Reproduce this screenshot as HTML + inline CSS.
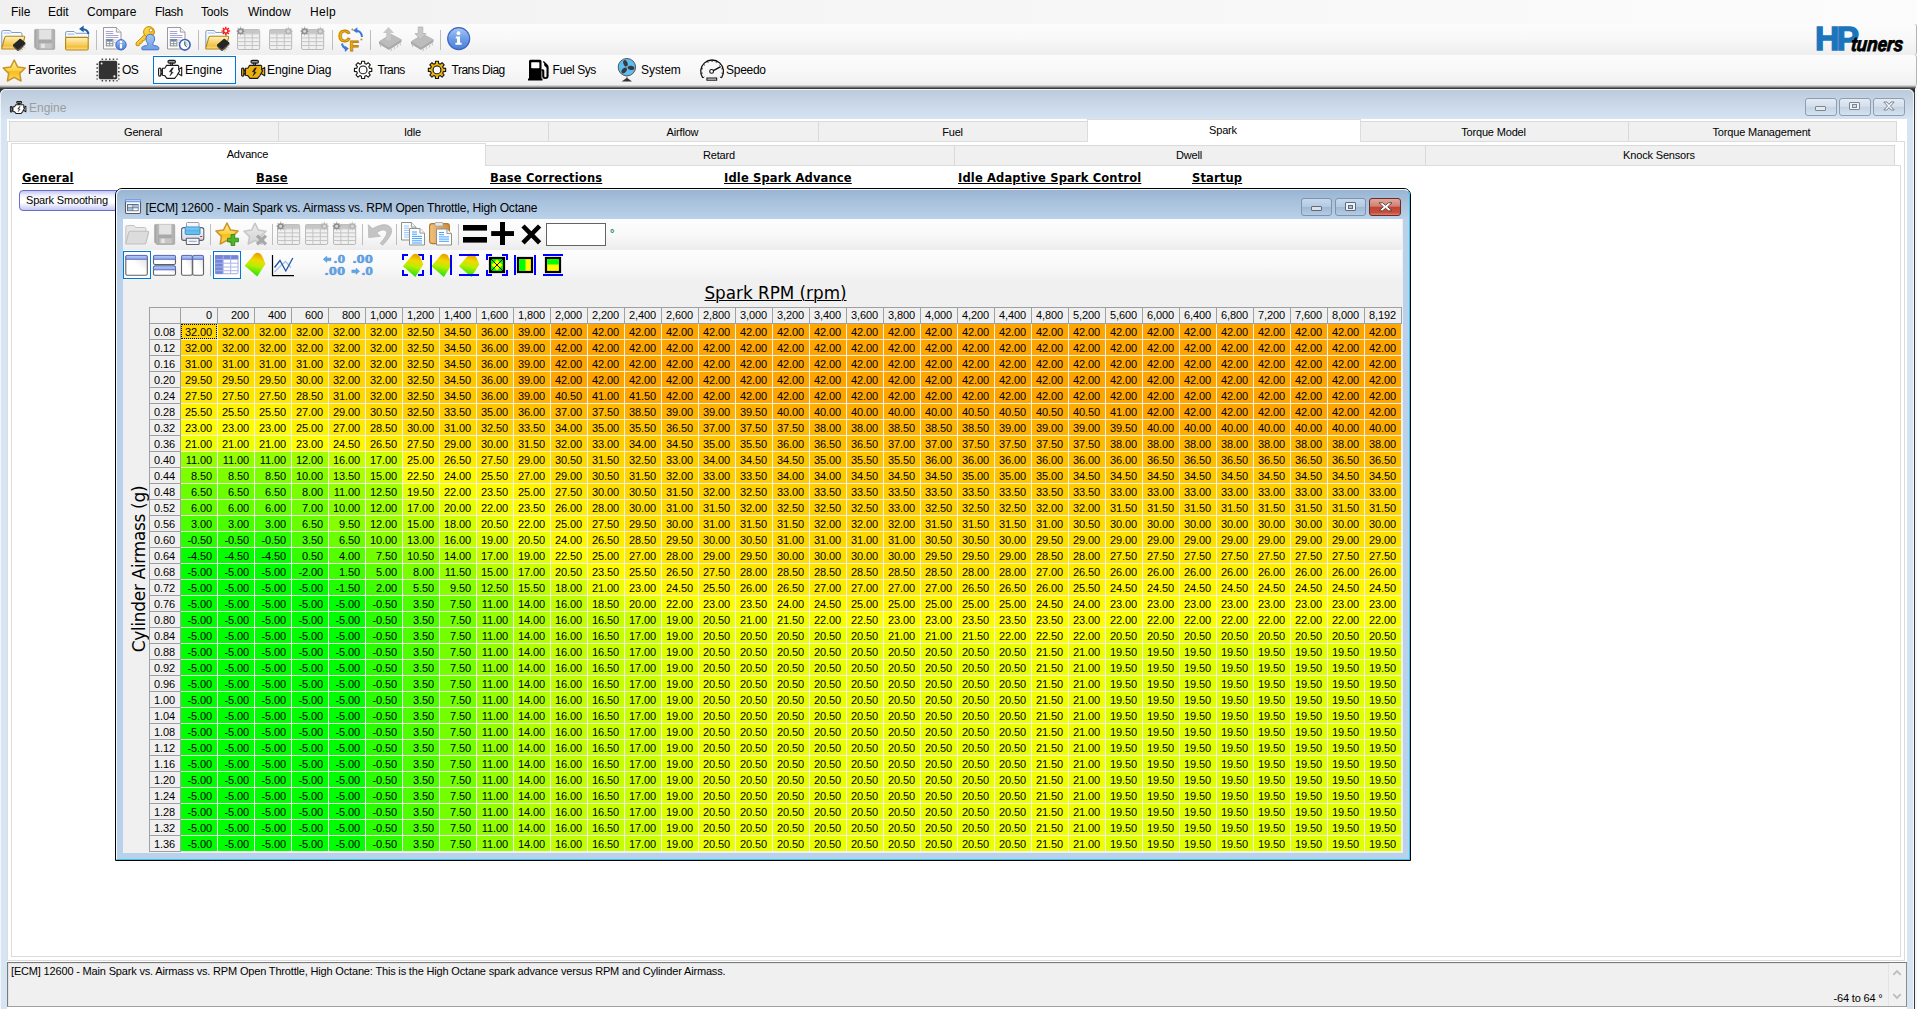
<!DOCTYPE html>
<html lang="en"><head><meta charset="utf-8"><title>VCM Editor</title>
<style>
html,body{margin:0;padding:0}
body{width:1917px;height:1009px;overflow:hidden;background:#f0f0f0;position:relative;font-family:"Liberation Sans",sans-serif;font-size:12px;color:#000}
div,span,i{box-sizing:border-box}
.abs{position:absolute}
svg{position:absolute;overflow:visible}
#menubar{position:absolute;left:0;top:0;width:1917px;height:24px;background:linear-gradient(90deg,#f0f0f0,#fcfcfc)}
#menubar span{position:absolute;top:5px;font-size:12px;line-height:15px;white-space:nowrap}
#tb1{position:absolute;left:0;top:24px;width:1917px;height:31px;border-right:1px solid #b4b4b4;background:linear-gradient(#fcfcfc,#f8f8f8 50%,#eeeeee);border-radius:0 3px 3px 0}
#tb2{position:absolute;left:0;top:55px;width:1917px;height:31px;border-right:1px solid #b4b4b4;background:linear-gradient(#fcfcfc,#f8f8f8 50%,#efefef);border-radius:0 3px 3px 0}
.sep{position:absolute;width:1px;background:#bdbdbd}
.tbl{position:absolute;font-size:12px;line-height:15px;white-space:nowrap}
#mdishadow{position:absolute;left:0;top:85px;width:1916px;height:4px;border-radius:0 0 3px 0;background:linear-gradient(#e6e6e6,#b0b0b0 35%,#5a5a5a 70%,#2e2e2e)}
#mdibg{position:absolute;left:0;top:89px;width:1917px;height:920px;background:#f6f6f6}
#mdicorner{position:absolute;left:0;top:88px;width:1915px;height:8px;background:#2e2e2e}
/* engine window */
#eng{position:absolute;left:-1px;top:88px;width:1916px;height:930px;background:#d7e4f2;border:1px solid #3a3a3a;border-radius:7px 7px 0 0}
#engcap{position:absolute;left:0;top:0;width:1914px;height:31px;background:linear-gradient(#bccbdc,#d7e4f2);border-radius:6px 6px 0 0;border:1px solid rgba(255,255,255,.7);border-bottom:none}
#engfr{position:absolute;left:0;top:30px;width:1914px;height:900px;border-left:1px solid rgba(255,255,255,.7);border-right:1px solid rgba(255,255,255,.7)}
.capbtn{position:absolute;height:18px;border:1px solid #8f9db0;border-radius:3px;background:linear-gradient(#e3ecf6,#d3deeb 48%,#c5d3e3 52%,#d5e1ee)}
.tab{position:absolute;background:#f0f0f0;border:1px solid #d9d9d9;font-size:11px;line-height:13px;text-align:center;white-space:nowrap;letter-spacing:-.17px;text-indent:-2px}
.tab.sel{background:#fff;border-color:#fff}
.hdg{position:absolute;font-family:"DejaVu Sans",sans-serif;font-weight:bold;font-size:11.5px;line-height:13px;white-space:nowrap;text-decoration:underline;letter-spacing:.15px}
/* child */
#child{position:absolute;left:115px;top:188px;width:1296px;height:673px;background:#b9d1ea;border:1px solid #000;border-radius:7px 7px 0 0}
#childcap{position:absolute;left:0;top:0;width:1294px;height:30px;background:linear-gradient(#98b4d2,#a9c2dd 45%,#b9d1ea);border-radius:6px 6px 0 0}
#client{position:absolute;left:7px;top:30px;width:1280px;height:634px;background:#f0f0f0}
.ctb{position:absolute;left:0;width:1279px;background:linear-gradient(#fdfdfd,#f9f9f9 50%,#ececec)}
#grid{position:absolute;left:26px;top:88px;width:1253px;height:545px}
#grid table{position:absolute;left:0;top:0;border-collapse:separate;border-spacing:1px;table-layout:fixed;font-size:11px;letter-spacing:-.1px;width:1253px}
#grid th,#grid td{vertical-align:top;height:13px;padding:2px 5px 0 0;text-align:right;font-weight:normal;line-height:13px;overflow:hidden;white-space:nowrap;width:31px}
#grid th{background:#f0f0f0}
#grid th.rl{width:25px;padding-right:5px}
#grid .hline{position:absolute;left:0;top:0;width:1253px;height:17px;background:#a0a0a0}
#grid .vline{position:absolute;left:0;top:0;width:32px;height:545px;background:#a0a0a0}
#grid .hb{display:none}
#grid .vb{display:none}
#grid td.sel{outline:1px dotted #000;outline-offset:-1px}
#desc{position:absolute;left:7px;top:962px;width:1900px;height:45px;background:#f0f0f0;border:1px solid #7a7a7a;border-right-color:#8c8c8c;border-bottom-color:#a0a0a0;box-shadow:inset 1px 1px 0 #e3e3e3;font-size:11px;line-height:13px;letter-spacing:-.17px}
#grid tr.hd th{height:14px;padding-top:1px}

</style></head>
<body>
<div id="menubar">
<span style="left:11px">File</span><span style="left:48px">Edit</span><span style="left:87px">Compare</span><span style="left:155px;letter-spacing:-.3px">Flash</span><span style="left:201px;letter-spacing:-.15px">Tools</span><span style="left:248px">Window</span><span style="left:310px;letter-spacing:.3px">Help</span>
</div>
<div id="tb1">
<svg width="0" height="0" style="left:0;top:0"><defs>
<linearGradient id="gFold" x1="0" y1="0" x2="0" y2="1"><stop offset="0" stop-color="#fff3c4"/><stop offset=".55" stop-color="#f7cf62"/><stop offset=".75" stop-color="#f3bf3c"/><stop offset="1" stop-color="#fbe39a"/></linearGradient>
<linearGradient id="gBack" x1="0" y1="0" x2="0" y2="1"><stop offset="0" stop-color="#ffffff"/><stop offset="1" stop-color="#dfeaf8"/></linearGradient>
<linearGradient id="gStar" x1="0" y1="0" x2="0" y2="1"><stop offset="0" stop-color="#fff2a8"/><stop offset=".5" stop-color="#fcd040"/><stop offset=".55" stop-color="#f8bd20"/><stop offset="1" stop-color="#fbd668"/></linearGradient>
<linearGradient id="gStarG" x1="0" y1="0" x2="0" y2="1"><stop offset="0" stop-color="#ececec"/><stop offset="1" stop-color="#d2d2d2"/></linearGradient>
<linearGradient id="gInfo" x1="0" y1="0" x2="0" y2="1"><stop offset="0" stop-color="#a9c6f2"/><stop offset=".5" stop-color="#6f9de6"/><stop offset="1" stop-color="#4a7fd6"/></linearGradient>
<linearGradient id="gUser" x1="0" y1="0" x2="0" y2="1"><stop offset="0" stop-color="#a8c6f0"/><stop offset="1" stop-color="#6f9ee4"/></linearGradient>
<linearGradient id="gKey" x1="0" y1="0" x2="1" y2="1"><stop offset="0" stop-color="#ffe36a"/><stop offset="1" stop-color="#f2b100"/></linearGradient>
<linearGradient id="gSurf" x1="0.6" y1="0" x2="0.4" y2="1"><stop offset="0" stop-color="#e89a00"/><stop offset=".3" stop-color="#f2d800"/><stop offset=".55" stop-color="#b8ee00"/><stop offset="1" stop-color="#10e010"/></linearGradient>
<linearGradient id="gWinBar" x1="0" y1="0" x2="0" y2="1"><stop offset="0" stop-color="#b9cdf6"/><stop offset="1" stop-color="#8aa6ea"/></linearGradient>
<linearGradient id="gWinBody" x1="0" y1="1" x2="1" y2="0"><stop offset="0" stop-color="#ffffff"/><stop offset=".5" stop-color="#ffffff"/><stop offset="1" stop-color="#dcdcdc"/></linearGradient>
<linearGradient id="gChipG" x1="0" y1="0" x2="1" y2="1"><stop offset="0" stop-color="#c4c4c4"/><stop offset="1" stop-color="#a2a2a2"/></linearGradient>
<linearGradient id="gClip" x1="0" y1="0" x2="1" y2="0"><stop offset="0" stop-color="#f0c27e"/><stop offset="1" stop-color="#c98f42"/></linearGradient>
<linearGradient id="gPrn" x1="0" y1="0" x2="0" y2="1"><stop offset="0" stop-color="#fbfbfd"/><stop offset="1" stop-color="#d6d8e0"/></linearGradient>
<linearGradient id="gPrnB" x1="0" y1="0" x2="0" y2="1"><stop offset="0" stop-color="#8fd4f7"/><stop offset=".5" stop-color="#58b4ea"/><stop offset="1" stop-color="#7cc8f2"/></linearGradient>
</defs></svg><svg style="left:0px;top:0px" width="480" height="31" viewBox="0 24 480 31"><path d="M1.8 47.5v-15.5q0-1.5 1.5-1.5h6.8l1.5 2h8.9q1.5 0 1.5 1.5v5" fill="url(#gBack)" stroke="#7f9dbd" stroke-width="1"/><path d="M3.6 32.4h6.5l1 1.2h-7.5z" fill="#9cc4f7"/><path d="M1.8 48.0l3-10.6q.3-1.2 1.6-1.2h17.2q1.4 0 1 1.3l-2.7 10.3q-.3 1.2-1.6 1.2h-17.5q-1.4 0-1-1z" fill="url(#gFold)" stroke="#b8860b" stroke-width="1.1"/><g transform="translate(19.2 44.2)"><path d="M-6 .2L.4 -5.200q.6-.5 1.300 0L6 -1.600q.6 .5 0 1.100L-.6 5.400q-.7 .6-1.400 0L-6 1.800q-.6-.8 0-1.600z" fill="#262626"/><path d="M-6.100 1.200L-1.600 5.400q.5 .5 1 0L6.200 -.6v1.200L-.4 6.600q-.8 .6-1.500 0L-6.100 2.600z" fill="#4d4d4d"/><path d="M1 6.200l.6 1M2.800 4.600l.6 1M4.600 3l.6 1" stroke="#9a9a9a" stroke-width=".9"/></g><path d="M35.4 29.4h18.5q.8 0 .8.8v18.4q0 .8-.8.8h-17l-2.3-2.1v-17.1q0-.8.8-.8z" fill="#a9a9a9" stroke="#9a9a9a" stroke-width=".6"/><rect x="38.9" y="29.4" width="12.5" height="10" fill="#e3e3e3" stroke="#c9c9c9" stroke-width=".6"/><rect x="39.4" y="43.2" width="12.4" height="5.4" fill="#c6c6c6"/><rect x="41.2" y="43.8" width="3.6" height="4.2" fill="#e4e4e4"/><path d="M37.2 30.0v18.5M52.9 30.0v18.5" stroke="#bdbdbd" stroke-width="1"/><path d="M65.6 45.0v-12q0-1.5 1.5-1.5h7l1.8 1.8h11.2q1.5 0 1.5 1.5v4" fill="url(#gBack)" stroke="#7f9dbd" stroke-width="1"/><path d="M67.4 33.6h6.5l1 1.2h-7.5z" fill="#9cc4f7"/><rect x="65.6" y="37.4" width="22.6" height="12.6" rx="1.2" fill="url(#gFold)" stroke="#b8860b" stroke-width="1.1"/><path d="M88.500 34q-.8-4.500-5.800-4.800" fill="none" stroke="#1c5fae" stroke-width="2"/><path d="M79 29l4.700-3.400v6.600z" fill="#1c5fae"/><path d="M103.5 27.5h12.9l4.6 4.6v16.9h-17.5z" fill="#fcfcfc" stroke="#9a9a9a" stroke-width="1"/><path d="M116.4 27.5v4.6h4.6" fill="#f0f0f0" stroke="#9a9a9a" stroke-width=".9"/><path d="M105.8 31.5h7.5M105.8 33.5h7.5M105.8 35.5h12.6M105.8 37.5h12.6" stroke="#a9a4d6" stroke-width="1"/><rect x="106.3" y="39.5" width="6.6" height="6.4" fill="#fff" stroke="#8a8a8a" stroke-width="1"/><rect x="106.8" y="40.0" width="5.6" height="1.6" fill="#4f8fc0"/><path d="M106.3 43.7h6.6M109.6 41.6v4.2" stroke="#8a8a8a" stroke-width=".9"/><path d="M114.0 40.0h2.5M114.0 42.5h2" stroke="#b7c4e6" stroke-width="1"/><circle cx="121.0" cy="44.8" r="5.2" fill="url(#gInfo)" stroke="#3a66c4" stroke-width="1"/><circle cx="121.0" cy="41.9" r="1.2" fill="#fff"/><rect x="119.9" y="43.8" width="2.2" height="4.6" fill="#fff"/><g transform="translate(135.0 26.4)"><path d="M9.600 8.200L1 16.600l.3 2.600 2.700 .1 .9-1 -.1-1.500 1.500 .1 .9-1 -.1-1.500 1.600 .1 4.500-4.500z" fill="url(#gKey)" stroke="#c48a00" stroke-width="1" stroke-linejoin="round"/><circle cx="14" cy="5.600" r="5.400" fill="url(#gKey)" stroke="#c48a00" stroke-width="1"/><circle cx="15.900" cy="3.900" r="1.700" fill="#fff" stroke="#c48a00" stroke-width=".9"/><path d="M15.300 7.900c2.500 0 4.300 1.900 4.300 4.600 0 1.900-.8 3.400-1.700 4.200v1.300c0 .6 .4 .9 1.200 1.100l3 .7c1.200 .3 1.700 1 1.700 2v.8c0 .5-.3 .8-.8 .8h-15.400c-.5 0-.8-.3-.8-.8v-.8c0-1 .5-1.700 1.700-2l3-.7c.8-.2 1.200-.5 1.200-1.100v-1.300c-.9-.8-1.700-2.300-1.700-4.200 0-2.700 1.800-4.600 4.300-4.600z" fill="url(#gUser)" stroke="#3d6fd0" stroke-width="1"/></g><path d="M167.5 27.5h12.9l4.6 4.6v16.9h-17.5z" fill="#fcfcfc" stroke="#9a9a9a" stroke-width="1"/><path d="M180.4 27.5v4.6h4.6" fill="#f0f0f0" stroke="#9a9a9a" stroke-width=".9"/><path d="M169.8 31.5h7.5M169.8 33.5h7.5M169.8 35.5h12.6M169.8 37.5h12.6" stroke="#a9a4d6" stroke-width="1"/><rect x="170.3" y="39.5" width="6.6" height="6.4" fill="#fff" stroke="#8a8a8a" stroke-width="1"/><rect x="170.8" y="40.0" width="5.6" height="1.6" fill="#4f8fc0"/><path d="M170.3 43.7h6.6M173.6 41.6v4.2" stroke="#8a8a8a" stroke-width=".9"/><path d="M178.0 40.0h2.5M178.0 42.5h2" stroke="#b7c4e6" stroke-width="1"/><circle cx="184.8" cy="44.8" r="5.3" fill="#fff" stroke="#3c5fb4" stroke-width="1.6"/><path d="M184.8 44.8v-3.6a3.6 3.6 0 0 1 3.1 5.4z" fill="#bfe0f2"/><path d="M184.8 41.4v3.6l2 2.2" fill="none" stroke="#444" stroke-width="1"/><path d="M205.8 47.5v-15.5q0-1.5 1.5-1.5h6.8l1.5 2h8.9q1.5 0 1.5 1.5v5" fill="url(#gBack)" stroke="#7f9dbd" stroke-width="1"/><path d="M207.6 32.4h6.5l1 1.2h-7.5z" fill="#9cc4f7"/><path d="M205.8 48.0l3-10.6q.3-1.2 1.6-1.2h17.2q1.4 0 1 1.3l-2.7 10.3q-.3 1.2-1.6 1.2h-17.5q-1.4 0-1-1z" fill="url(#gFold)" stroke="#b8860b" stroke-width="1.1"/><g transform="translate(223.2 44.2)"><path d="M-6 .2L.4 -5.200q.6-.5 1.300 0L6 -1.600q.6 .5 0 1.100L-.6 5.400q-.7 .6-1.400 0L-6 1.800q-.6-.8 0-1.600z" fill="#262626"/><path d="M-6.100 1.200L-1.600 5.400q.5 .5 1 0L6.200 -.6v1.200L-.4 6.600q-.8 .6-1.500 0L-6.100 2.600z" fill="#4d4d4d"/><path d="M1 6.200l.6 1M2.800 4.600l.6 1M4.600 3l.6 1" stroke="#9a9a9a" stroke-width=".9"/></g><g stroke="#ff1010" stroke-width="1.3"><path d="M227.80 31.00L230.10 31.00"/><path d="M227.21 32.41L228.84 34.04"/><path d="M225.80 33.00L225.80 35.30"/><path d="M224.39 32.41L222.76 34.04"/><path d="M223.80 31.00L221.50 31.00"/><path d="M224.39 29.59L222.76 27.96"/><path d="M225.80 29.00L225.80 26.70"/><path d="M227.21 29.59L228.84 27.96"/></g><circle cx="225.8" cy="31.0" r="2.1" fill="#fff" stroke="#ff1010" stroke-width="1.3"/><rect x="237.5" y="29.5" width="22.2" height="20" rx="1.5" fill="#f0f0f0" stroke="#b9b9b9" stroke-width="1"/><path d="M237.5 30.5q0-1 1-1h20.200q1 0 1 1v3h-22.200z" fill="#c6c6c6"/><path d="M237.5 33.9h22.2M237.5 37.9h22.2M237.5 41.7h22.2M237.5 45.5h22.2" stroke="#c4c4c4" stroke-width="1"/><path d="M244.9 30.0v19M252.3 30.0v19" stroke="#c4c4c4" stroke-width="1"/><g stroke="#8c8c8c" stroke-width="1.2" stroke-dasharray="1 .6"><path d="M243.00 31.20L245.00 31.20"/><path d="M242.30 32.90L243.71 34.31"/><path d="M240.60 33.60L240.60 35.60"/><path d="M238.90 32.90L237.49 34.31"/><path d="M238.20 31.20L236.20 31.20"/><path d="M238.90 29.50L237.49 28.09"/><path d="M240.60 28.80L240.60 26.80"/><path d="M242.30 29.50L243.71 28.09"/></g><circle cx="240.6" cy="31.2" r="2.2" fill="#d8d8d8" stroke="#8c8c8c" stroke-width="1.3"/><rect x="269.5" y="29.5" width="22.2" height="20" rx="1.5" fill="#f0f0f0" stroke="#b9b9b9" stroke-width="1"/><path d="M269.5 30.5q0-1 1-1h20.200q1 0 1 1v3h-22.200z" fill="#c6c6c6"/><path d="M269.5 33.9h22.2M269.5 37.9h22.2M269.5 41.7h22.2M269.5 45.5h22.2" stroke="#c4c4c4" stroke-width="1"/><path d="M276.9 30.0v19M284.3 30.0v19" stroke="#c4c4c4" stroke-width="1"/><g stroke="#b4b4b4" stroke-width="1.2" stroke-dasharray="1 .6"><path d="M290.80 31.20L292.80 31.20"/><path d="M290.10 32.90L291.51 34.31"/><path d="M288.40 33.60L288.40 35.60"/><path d="M286.70 32.90L285.29 34.31"/><path d="M286.00 31.20L284.00 31.20"/><path d="M286.70 29.50L285.29 28.09"/><path d="M288.40 28.80L288.40 26.80"/><path d="M290.10 29.50L291.51 28.09"/></g><circle cx="288.4" cy="31.2" r="2.2" fill="#d8d8d8" stroke="#b4b4b4" stroke-width="1.3"/><rect x="301.5" y="29.5" width="22.2" height="20" rx="1.5" fill="#f0f0f0" stroke="#b9b9b9" stroke-width="1"/><path d="M301.5 30.5q0-1 1-1h20.200q1 0 1 1v3h-22.200z" fill="#c6c6c6"/><path d="M301.5 33.9h22.2M301.5 37.9h22.2M301.5 41.7h22.2M301.5 45.5h22.2" stroke="#c4c4c4" stroke-width="1"/><path d="M308.9 30.0v19M316.3 30.0v19" stroke="#c4c4c4" stroke-width="1"/><g stroke="#8c8c8c" stroke-width="1.2" stroke-dasharray="1 .6"><path d="M307.00 31.20L309.00 31.20"/><path d="M306.30 32.90L307.71 34.31"/><path d="M304.60 33.60L304.60 35.60"/><path d="M302.90 32.90L301.49 34.31"/><path d="M302.20 31.20L300.20 31.20"/><path d="M302.90 29.50L301.49 28.09"/><path d="M304.60 28.80L304.60 26.80"/><path d="M306.30 29.50L307.71 28.09"/></g><circle cx="304.6" cy="31.2" r="2.2" fill="#d8d8d8" stroke="#8c8c8c" stroke-width="1.3"/><g stroke="#b4b4b4" stroke-width="1.2" stroke-dasharray="1 .6"><path d="M322.80 31.20L324.80 31.20"/><path d="M322.10 32.90L323.51 34.31"/><path d="M320.40 33.60L320.40 35.60"/><path d="M318.70 32.90L317.29 34.31"/><path d="M318.00 31.20L316.00 31.20"/><path d="M318.70 29.50L317.29 28.09"/><path d="M320.40 28.80L320.40 26.80"/><path d="M322.10 29.50L323.51 28.09"/></g><circle cx="320.4" cy="31.2" r="2.2" fill="#d8d8d8" stroke="#b4b4b4" stroke-width="1.3"/><text x="338.2" y="41.6" font-family="Liberation Sans,sans-serif" font-weight="bold" font-size="17" fill="#f5b400" stroke="#b87800" stroke-width=".8">C</text><text x="349.6" y="50.8" font-family="Liberation Sans,sans-serif" font-weight="bold" font-size="15.5" fill="#f5b400" stroke="#b87800" stroke-width=".8">F</text><path d="M356.0 30.5q5.500 .5 6 6.500" fill="none" stroke="#3c78d8" stroke-width="2"/><path d="M353.0 30.6l4.400-3.400v6z" fill="#3c78d8"/><path d="M342.0 43.5q.8 4.500 4.500 5" fill="none" stroke="#3c78d8" stroke-width="2"/><path d="M348.8 48.4l-3.800 3.600-.6-6.400z" fill="#3c78d8"/><circle cx="352.4" cy="29.4" r="1" fill="#d08a00"/><circle cx="361.4" cy="39.6" r="1" fill="#d08a00"/><g transform="translate(378.0 27.0)"><path d="M1 14.500L13 7l10.500 5.500v2.500L11 23 1 17z" fill="#a9a9a9"/><path d="M1 14.500L13 7l10.500 5.500L11 20.500z" fill="#bcbcbc"/><path d="M13.500 21.500v2.500M16.500 19.800v2.500M19.500 18v2.500M22.300 16.300v2.300M2.500 17.800v2.200" stroke="#c9c9c9" stroke-width="1.2"/><path d="M10.500 0l5.500 6h-3.200v7.500h-4.600v-7.500h-3.200z" fill="#c8c8c8"/></g><g transform="translate(410.0 27.0)"><path d="M1 14.500L13 7l10.500 5.500v2.500L11 23 1 17z" fill="#a9a9a9"/><path d="M1 14.500L13 7l10.500 5.500L11 20.500z" fill="#bcbcbc"/><path d="M13.500 21.500v2.500M16.500 19.800v2.500M19.500 18v2.500M22.300 16.300v2.300M2.500 17.800v2.200" stroke="#c9c9c9" stroke-width="1.2"/><path d="M8.200 0h4.600v6.500h3.200l-5.500 6-5.500-6h3.200z" fill="#c8c8c8" stroke="#b3b3b3" stroke-width=".8"/></g><circle cx="458.7" cy="38.6" r="11.0" fill="url(#gInfo)" stroke="#3a66c4" stroke-width="1.2"/><circle cx="458.5" cy="33.2" r="1.9" fill="#fff"/><path d="M456.1 36.4h3.9v6.3h1.6v2h-6.2v-2h1.7v-4.3h-1.6z" fill="#fff"/></svg>

<div class="sep" style="left:96px;top:6px;height:20px"></div>

<div class="sep" style="left:198px;top:6px;height:20px"></div>

<div class="sep" style="left:332px;top:6px;height:20px"></div>

<div class="sep" style="left:370px;top:6px;height:20px"></div>

<div class="sep" style="left:440px;top:6px;height:20px"></div>

<div id="logo" class="abs" style="left:1815px;top:1px;width:95px;height:28px">
<span class="abs" style="left:-.5px;top:-1.6px;font-weight:bold;font-size:33.5px;line-height:34px;color:#1b75bc;-webkit-text-stroke:1.3px #1b75bc;letter-spacing:-2.9px;transform-origin:0 0;transform:scale(1.01,.98)">HP</span>
<span class="abs" style="left:36.5px;top:7.5px;font-weight:bold;font-style:italic;font-size:20px;line-height:22px;color:#000;-webkit-text-stroke:.9px #000;letter-spacing:-.1px;transform-origin:0 0;transform:scale(.86,1) skewX(-5deg)">tuners</span>
</div>
</div>
<div id="tb2">
<div class="abs" style="left:153px;top:1px;width:83px;height:28px;border:1px solid #0078d7;background:#fcfdff"></div>
<svg style="left:0px;top:0px" width="780" height="31" viewBox="0 55 780 31"><path d="M14.20 60.00L17.61 66.91L25.23 68.02L19.72 73.39L21.02 80.98L14.20 77.40L7.38 80.98L8.68 73.39L3.17 68.02L10.79 66.91z" fill="url(#gStar)" stroke="#c9952a" stroke-width="1.5" stroke-linejoin="round"/><rect x="98.8" y="60.8" width="18.4" height="18.4" rx="1.6" fill="#333"/><g stroke="#444" stroke-width="1.6" stroke-dasharray="1.5 2.2"><path d="M101.6 59.2h16"/><path d="M101.6 80.8h16"/><path d="M97.2 63.6v16"/><path d="M118.8 63.6v16"/></g><circle cx="101.6" cy="63.6" r="1" fill="#eee"/><circle cx="114.4" cy="76.4" r="1.1" fill="#eee"/><g transform="translate(158.0 60.0)" fill="#fff" stroke="#1a1a1a" stroke-width="1.1" stroke-linejoin="round" stroke-linecap="round"><rect x="10" y=".4" width="7.400" height="2.700" rx="1.200" fill="#999"/><path d="M12.600 3.200l.3 2.200M14.500 3.200l-.2 2.200" fill="none"/><rect x=".6" y="8.100" width="2.300" height="8" rx="1"/><path d="M2.900 9.600l1.500 2.500-1.500 2.500" fill="none"/><path d="M20.600 9.500l3.100-2.100v8.300l-3.700-2.200z"/><path d="M8.600 5.400h11.400l.7 .8-.1 3.300 1 1.600-1.600 2.400-1 2-2.400 2.900h-7.700l-2.100-2.800-2.400-.3v-7h2.400z"/><path d="M14 8l-2.700 3.800h2.400l-1.800 4.200 3.300-3.800h-2.200l2.300-4.200z" fill="#111" stroke="#111" stroke-width=".4"/></g><g transform="translate(241.0 60.0)" fill="#ebb010" stroke="#1a1a1a" stroke-width="1.1" stroke-linejoin="round" stroke-linecap="round"><rect x="10" y=".4" width="7.400" height="2.700" rx="1.200" fill="#999"/><path d="M12.600 3.200l.3 2.200M14.500 3.200l-.2 2.200" fill="none"/><rect x=".6" y="8.100" width="2.300" height="8" rx="1"/><path d="M2.900 9.600l1.500 2.500-1.500 2.500" fill="none"/><path d="M20.600 9.500l3.100-2.100v8.300l-3.700-2.200z"/><path d="M8.600 5.400h11.400l.7 .8-.1 3.300 1 1.600-1.600 2.400-1 2-2.400 2.900h-7.700l-2.100-2.800-2.400-.3v-7h2.400z"/><path d="M14 8l-2.700 3.800h2.400l-1.800 4.200 3.300-3.800h-2.200l2.300-4.200z" fill="#111" stroke="#111" stroke-width=".4"/></g><path d="M361.40 63.52L361.61 61.23L364.59 61.23L364.80 63.52L366.41 64.19L368.18 62.71L370.29 64.82L368.81 66.59L369.48 68.20L371.77 68.41L371.77 71.39L369.48 71.60L368.81 73.21L370.29 74.98L368.18 77.09L366.41 75.61L364.80 76.28L364.59 78.57L361.61 78.57L361.40 76.28L359.79 75.61L358.02 77.09L355.91 74.98L357.39 73.21L356.72 71.60L354.43 71.39L354.43 68.41L356.72 68.20L357.39 66.59L355.91 64.82L358.02 62.71L359.79 64.19z" fill="#fff" stroke="#111" stroke-width="1.1" stroke-linejoin="round"/><circle cx="363.1" cy="69.9" r="3.9" fill="#fbfbfb" stroke="#111" stroke-width="1.1"/><path d="M435.30 63.52L435.51 61.23L438.49 61.23L438.70 63.52L440.31 64.19L442.08 62.71L444.19 64.82L442.71 66.59L443.38 68.20L445.67 68.41L445.67 71.39L443.38 71.60L442.71 73.21L444.19 74.98L442.08 77.09L440.31 75.61L438.70 76.28L438.49 78.57L435.51 78.57L435.30 76.28L433.69 75.61L431.92 77.09L429.81 74.98L431.29 73.21L430.62 71.60L428.33 71.39L428.33 68.41L430.62 68.20L431.29 66.59L429.81 64.82L431.92 62.71L433.69 64.19z" fill="#edb40e" stroke="#111" stroke-width="1.1" stroke-linejoin="round"/><circle cx="437.0" cy="69.9" r="3.9" fill="#fbfbfb" stroke="#111" stroke-width="1.1"/><g transform="translate(527.0 59.8)" fill="#000"><path d="M2 1.500q0-1.500 1.500-1.500h9.500q1.500 0 1.500 1.500v17.300h1v2h-14.500v-2h1z"/><rect x="4.200" y="2.400" width="8.200" height="6" rx=".6" fill="#fff"/><path d="M14.500 9.500h1.300q1.500 0 1.500 1.500v5.200q0 1.200 1.100 1.200t1.100-1.200v-8.200l-2.300-2.200v-2.300l-1.400-1.300 1-1 3.600 3.500q1.200 1.100 1.200 2.600v9q0 3-3.200 3t-3.200-3v-4.800h-.7z" fill="#000"/></g><circle cx="626.9" cy="67.2" r="8.700" fill="#5bbdf2" stroke="#555" stroke-width="1"/><ellipse cx="626.9" cy="63.0" rx="2.100" ry="3.300" fill="#3a3a3a" transform="rotate(-20 626.9 67.2)"/><ellipse cx="626.9" cy="63.0" rx="2.100" ry="3.300" fill="#3a3a3a" transform="rotate(100 626.9 67.2)"/><ellipse cx="626.9" cy="63.0" rx="2.100" ry="3.300" fill="#3a3a3a" transform="rotate(220 626.9 67.2)"/><circle cx="626.9" cy="67.2" r="1" fill="#888"/><path d="M626.9 77.8l5.200 3.800h-10.400z" fill="#333"/><path d="M626.9 76.0v2" stroke="#999" stroke-width="1.500"/><path d="M702.76 77.94A11.4 11.4 0 1 1 721.44 77.94" fill="none" stroke="#111" stroke-width="1.300"/><g stroke="#111" stroke-width="1"><path d="M703.09 77.71L704.24 76.91"/><path d="M701.27 73.31L702.65 73.07"/><path d="M701.47 68.55L702.83 68.92"/><path d="M703.67 64.33L704.75 65.23"/><path d="M707.45 61.43L708.04 62.70"/><path d="M712.10 60.40L712.10 61.80"/><path d="M716.75 61.43L716.16 62.70"/><path d="M720.53 64.33L719.45 65.23"/><path d="M722.73 68.55L721.37 68.92"/><path d="M722.93 73.31L721.55 73.07"/><path d="M721.11 77.71L719.96 76.91"/></g><path d="M712.9 70.8L720.7 66.6" stroke="#111" stroke-width="1.400"/><circle cx="711.6" cy="71.4" r="1.900" fill="#fff" stroke="#111" stroke-width="1.100"/><rect x="706.9" y="78.0" width="9.800" height="2.200" fill="#ddd" stroke="#111" stroke-width="1"/></svg>
<span class="tbl" style="left:28px;top:8px;letter-spacing:-0.13px">Favorites</span>
<span class="tbl" style="left:122px;top:8px;letter-spacing:-0.50px">OS</span>
<span class="tbl" style="left:185px;top:8px;letter-spacing:0.00px">Engine</span>
<span class="tbl" style="left:267px;top:8px;letter-spacing:-0.09px">Engine Diag</span>
<span class="tbl" style="left:377.5px;top:8px;letter-spacing:-0.64px">Trans</span>
<span class="tbl" style="left:451.5px;top:8px;letter-spacing:-0.50px">Trans Diag</span>
<span class="tbl" style="left:552.5px;top:8px;letter-spacing:-0.41px">Fuel Sys</span>
<span class="tbl" style="left:641px;top:8px;letter-spacing:-0.05px">System</span>
<span class="tbl" style="left:726px;top:8px;letter-spacing:-0.27px">Speedo</span>
</div>
<div id="mdibg"></div><div id="mdicorner"></div><div id="mdishadow"></div>
<div id="eng">
<div id="engcap"></div><div id="engfr"></div>
<svg style="left:9px;top:10px" width="20" height="18" viewBox="8 98 20 18"><g transform="translate(9 100.2) scale(.67)"><g transform="translate(0.0 0.0)" fill="#fff" stroke="#1a1a1a" stroke-width="1.5" stroke-linejoin="round" stroke-linecap="round"><rect x="10" y=".4" width="7.400" height="2.700" rx="1.200" fill="#999"/><path d="M12.600 3.200l.3 2.200M14.500 3.200l-.2 2.200" fill="none"/><rect x=".6" y="8.100" width="2.300" height="8" rx="1"/><path d="M2.900 9.600l1.500 2.500-1.500 2.500" fill="none"/><path d="M20.600 9.500l3.100-2.100v8.300l-3.700-2.200z"/><path d="M8.600 5.400h11.400l.7 .8-.1 3.300 1 1.600-1.600 2.400-1 2-2.400 2.900h-7.700l-2.100-2.800-2.400-.3v-7h2.400z"/><path d="M14 8l-2.700 3.800h2.400l-1.800 4.200 3.300-3.800h-2.200l2.300-4.200z" fill="#333" stroke="#333" stroke-width=".4"/></g></g></svg><span class="abs" style="left:29px;top:12px;font-size:12px;line-height:15px;color:#9c9c9c">Engine</span>
<div class="capbtn" style="left:1805px;top:9px;width:32px"><i class="abs" style="left:9px;top:7px;width:11px;height:5px;border:1px solid #7b8594;background:#e4e9ef;border-radius:1px"></i></div>
<div class="capbtn" style="left:1839px;top:9px;width:32px"><i class="abs" style="left:9px;top:3px;width:11px;height:8px;border:1px solid #7b8594;background:#eef2f7;border-radius:1px"></i><i class="abs" style="left:12px;top:5px;width:5px;height:4px;border:1px solid #7b8594;background:#cfdbe9"></i></div>
<div class="capbtn" style="left:1873px;top:9px;width:32px"><svg style="left:9px;top:2px" width="12" height="10" viewBox="0 0 12 10"><path d="M.8 1h3.100L6 3.400 8.100 1h3.100L7.500 5l3.700 4H8.100L6 6.600 3.900 9H.8l3.700-4z" fill="#f4f6fa" stroke="#7b8594" stroke-width="1"/></svg></div>
<div class="abs" style="left:7px;top:30px;width:1900px;height:900px;background:#fff"></div>
<!-- outer tabs -->
<div class="tab" style="left:9px;top:32px;width:270px;height:21px;padding-top:4px">General</div>
<div class="tab" style="left:278px;top:32px;width:271px;height:21px;padding-top:4px">Idle</div>
<div class="tab" style="left:548px;top:32px;width:271px;height:21px;padding-top:4px">Airflow</div>
<div class="tab" style="left:818px;top:32px;width:271px;height:21px;padding-top:4px">Fuel</div>
<div class="tab" style="left:1360px;top:32px;width:269px;height:21px;padding-top:4px">Torque Model</div>
<div class="tab" style="left:1628px;top:32px;width:269px;height:21px;padding-top:4px">Torque Management</div>
<div class="abs" style="left:7px;top:52px;width:1898px;height:820px;border:1px solid #dcdcdc;background:#fff"></div>
<div class="tab sel" style="left:1087px;top:30px;width:274px;height:23px;padding-top:4px;border:1px solid #dcdcdc;border-bottom:none">Spark</div>
<!-- inner tabs -->
<div class="tab" style="left:485px;top:56px;width:470px;height:21px;padding-top:3px">Retard</div>
<div class="tab" style="left:954px;top:56px;width:472px;height:21px;padding-top:3px">Dwell</div>
<div class="tab" style="left:1425px;top:56px;width:470px;height:21px;padding-top:3px">Knock Sensors</div>
<div class="abs" style="left:11px;top:76px;width:1890px;height:792px;border:1px solid #dcdcdc;background:#fff"></div>
<div class="tab sel" style="left:11px;top:54px;width:475px;height:23px;padding-top:4px;border:1px solid #dcdcdc;border-bottom:none">Advance</div>
<span class="hdg" style="left:22px;top:83px">General</span>
<span class="hdg" style="left:256px;top:83px">Base</span>
<span class="hdg" style="left:490px;top:83px">Base Corrections</span>
<span class="hdg" style="left:724px;top:83px">Idle Spark Advance</span>
<span class="hdg" style="left:958px;top:83px">Idle Adaptive Spark Control</span>
<span class="hdg" style="left:1192px;top:83px">Startup</span>
<div class="abs" style="left:19px;top:101px;width:110px;height:21px;border:1px solid #6a6ec4;border-radius:4px;background:linear-gradient(#c2c6f3,#eceefc 22%,#fff 42%,#fff 60%,#e4e6fb 78%,#c4c8f4);font-size:11px;line-height:13px;padding:3px 0 0 6px;white-space:nowrap;letter-spacing:-.17px">Spark Smoothing</div>
</div>
<div id="child">
<div id="childcap"></div>
<div class="abs" style="left:0;top:0;width:1294px;height:671px;border:1px solid rgba(255,255,255,.9);border-bottom-color:#36c5ee;border-right-color:#36c5ee;border-radius:6px 6px 0 0"></div>
<svg style="left:9px;top:9px" width="18" height="18" viewBox="125 198 18 18"><rect x="125.500" y="200.500" width="15" height="13" rx="1.200" fill="#fdfdfd" stroke="#5a5a5a" stroke-width="1.100"/><rect x="125" y="199" width="16" height="3.200" rx="1" fill="#6c92e0"/><rect x="126" y="199.800" width="14" height="1.400" fill="#b9d2fa"/><rect x="127.500" y="204.500" width="10.600" height="6.200" fill="#fff" stroke="#5a6e8c" stroke-width="1"/><rect x="128" y="205" width="4.400" height="2.300" fill="#e2e2e2"/><rect x="133.300" y="205" width="4.300" height="2.300" fill="#9cc4dc"/><rect x="128" y="208.200" width="4.400" height="2" fill="#9cc4dc"/><rect x="133.300" y="208.200" width="4.300" height="2" fill="#ffffff"/><path d="M127.500 207.750h10.600M132.850 204.500v6.200" stroke="#5a6e8c" stroke-width=".9"/></svg>
<span class="abs" style="left:29.5px;top:12px;font-size:12px;line-height:15px;white-space:nowrap;letter-spacing:-.18px" id="ctitle">[ECM] 12600 - Main Spark vs. Airmass vs. RPM Open Throttle, High Octane</span>
<div class="capbtn" style="left:1185px;top:9px;width:31px;border-color:#7f93ab;background:linear-gradient(#c5d8ec,#b4cae2 48%,#9fb9d6 52%,#b4cbe3)"><i class="abs" style="left:9px;top:7px;width:11px;height:5px;border:1px solid #5f6b7c;background:#dcdfe3;border-radius:1px"></i></div>
<div class="capbtn" style="left:1219px;top:9px;width:31px;border-color:#7f93ab;background:linear-gradient(#c5d8ec,#b4cae2 48%,#9fb9d6 52%,#b4cbe3)"><i class="abs" style="left:9px;top:3px;width:11px;height:9px;border:1px solid #5f6b7c;background:#eef1f5;border-radius:1px"></i><i class="abs" style="left:12px;top:6px;width:5px;height:4px;border:1px solid #5f6b7c;background:#a9c1dc"></i></div>
<div class="capbtn" style="left:1253px;top:9px;width:32px;border-color:#6b2c25;background:linear-gradient(#e0a89e,#d27f72 45%,#bf4433 52%,#c9503e 85%,#d9826f)"><svg style="left:8px;top:3px" width="15" height="10" viewBox="0 0 15 10"><path d="M1 .8h3.600L7.500 3.300 10.400 .8H14L9.700 4.800 14 8.800h-3.600L7.500 6.300 4.600 8.800H1L5.300 4.800z" fill="#fff" stroke="#5a3a3a" stroke-width=".9" stroke-linejoin="round"/></svg></div>
<div id="client">
<div class="ctb" style="top:0;height:31px">
<svg style="left:0px;top:0px" width="500" height="31" viewBox="123 219 500 31"><path d="M125.8 242.5v-15.5q0-1.5 1.5-1.5h6.8l1.5 2h8.9q1.5 0 1.5 1.5v5" fill="#e6e6e6" stroke="#c3c3c3" stroke-width="1"/><path d="M125.8 243.0l3-10.6q.3-1.2 1.6-1.2h17.2q1.4 0 1 1.3l-2.7 10.3q-.3 1.2-1.6 1.2h-17.5q-1.4 0-1-1z" fill="#dcdcdc" stroke="#bfbfbf" stroke-width="1.1"/><path d="M155.4 224.4h18.5q.8 0 .8.8v18.4q0 .8-.8.8h-17l-2.3-2.1v-17.1q0-.8.8-.8z" fill="#a9a9a9" stroke="#9a9a9a" stroke-width=".6"/><rect x="158.9" y="224.4" width="12.5" height="10" fill="#e3e3e3" stroke="#c9c9c9" stroke-width=".6"/><rect x="159.4" y="238.2" width="12.4" height="5.4" fill="#c6c6c6"/><rect x="161.2" y="238.8" width="3.6" height="4.2" fill="#e4e4e4"/><path d="M157.2 225.0v18.5M172.9 225.0v18.5" stroke="#bdbdbd" stroke-width="1"/><g transform="translate(181.0 222.0)"><rect x="5.500" y=".5" width="12.500" height="7" rx="1" fill="#f4f5fb" stroke="#9a9fb0" stroke-width="1"/><rect x=".6" y="5.600" width="22.200" height="12.800" rx="2.200" fill="url(#gPrn)" stroke="#5c6173" stroke-width="1.100"/><rect x="4.200" y="5" width="14.800" height="7.400" rx=".8" fill="url(#gPrnB)" stroke="#2f8fd0" stroke-width="1"/><rect x="19.200" y="14" width="2" height="1" fill="#d02020"/><rect x="5.300" y="16.200" width="12.800" height="6.300" rx=".8" fill="#f4f5fb" stroke="#5c6173" stroke-width="1.100"/><path d="M7.800 19.300h7.800" stroke="#9a9fb0" stroke-width="1"/></g><path d="M227.00 223.00L230.41 229.91L238.03 231.02L232.52 236.39L233.82 243.98L227.00 240.40L220.18 243.98L221.48 236.39L215.97 231.02L223.59 229.91z" fill="url(#gStar)" stroke="#c9952a" stroke-width="1.5" stroke-linejoin="round"/><path d="M231.1 234.5h3.600v3.700h3.700v3.600h-3.700v3.700h-3.600v-3.700h-3.700v-3.600h3.700z" fill="#4cb52c" stroke="#2f8a14" stroke-width=".9" stroke-linejoin="round"/><path d="M255.00 223.20L258.41 230.11L266.03 231.22L260.52 236.59L261.82 244.18L255.00 240.60L248.18 244.18L249.48 236.59L243.97 231.22L251.59 230.11z" fill="url(#gStarG)" stroke="#c6c6c6" stroke-width="1.5" stroke-linejoin="round"/><path d="M257.1 235.6L265.9 244.4M265.9 235.6L257.1 244.4" stroke="#a8a8a8" stroke-width="3.400"/><rect x="277.5" y="224.5" width="22.2" height="20" rx="1.5" fill="#f0f0f0" stroke="#b9b9b9" stroke-width="1"/><path d="M277.5 225.5q0-1 1-1h20.200q1 0 1 1v3h-22.200z" fill="#c6c6c6"/><path d="M277.5 228.9h22.2M277.5 232.9h22.2M277.5 236.7h22.2M277.5 240.5h22.2" stroke="#c4c4c4" stroke-width="1"/><path d="M284.9 225.0v19M292.3 225.0v19" stroke="#c4c4c4" stroke-width="1"/><g stroke="#8c8c8c" stroke-width="1.2" stroke-dasharray="1 .6"><path d="M283.00 226.20L285.00 226.20"/><path d="M282.30 227.90L283.71 229.31"/><path d="M280.60 228.60L280.60 230.60"/><path d="M278.90 227.90L277.49 229.31"/><path d="M278.20 226.20L276.20 226.20"/><path d="M278.90 224.50L277.49 223.09"/><path d="M280.60 223.80L280.60 221.80"/><path d="M282.30 224.50L283.71 223.09"/></g><circle cx="280.6" cy="226.2" r="2.2" fill="#d8d8d8" stroke="#8c8c8c" stroke-width="1.3"/><rect x="305.5" y="224.5" width="22.2" height="20" rx="1.5" fill="#f0f0f0" stroke="#b9b9b9" stroke-width="1"/><path d="M305.5 225.5q0-1 1-1h20.200q1 0 1 1v3h-22.200z" fill="#c6c6c6"/><path d="M305.5 228.9h22.2M305.5 232.9h22.2M305.5 236.7h22.2M305.5 240.5h22.2" stroke="#c4c4c4" stroke-width="1"/><path d="M312.9 225.0v19M320.3 225.0v19" stroke="#c4c4c4" stroke-width="1"/><g stroke="#b4b4b4" stroke-width="1.2" stroke-dasharray="1 .6"><path d="M326.80 226.20L328.80 226.20"/><path d="M326.10 227.90L327.51 229.31"/><path d="M324.40 228.60L324.40 230.60"/><path d="M322.70 227.90L321.29 229.31"/><path d="M322.00 226.20L320.00 226.20"/><path d="M322.70 224.50L321.29 223.09"/><path d="M324.40 223.80L324.40 221.80"/><path d="M326.10 224.50L327.51 223.09"/></g><circle cx="324.4" cy="226.2" r="2.2" fill="#d8d8d8" stroke="#b4b4b4" stroke-width="1.3"/><rect x="333.5" y="224.5" width="22.2" height="20" rx="1.5" fill="#f0f0f0" stroke="#b9b9b9" stroke-width="1"/><path d="M333.5 225.5q0-1 1-1h20.200q1 0 1 1v3h-22.200z" fill="#c6c6c6"/><path d="M333.5 228.9h22.2M333.5 232.9h22.2M333.5 236.7h22.2M333.5 240.5h22.2" stroke="#c4c4c4" stroke-width="1"/><path d="M340.9 225.0v19M348.3 225.0v19" stroke="#c4c4c4" stroke-width="1"/><g stroke="#8c8c8c" stroke-width="1.2" stroke-dasharray="1 .6"><path d="M339.00 226.20L341.00 226.20"/><path d="M338.30 227.90L339.71 229.31"/><path d="M336.60 228.60L336.60 230.60"/><path d="M334.90 227.90L333.49 229.31"/><path d="M334.20 226.20L332.20 226.20"/><path d="M334.90 224.50L333.49 223.09"/><path d="M336.60 223.80L336.60 221.80"/><path d="M338.30 224.50L339.71 223.09"/></g><circle cx="336.6" cy="226.2" r="2.2" fill="#d8d8d8" stroke="#8c8c8c" stroke-width="1.3"/><g stroke="#b4b4b4" stroke-width="1.2" stroke-dasharray="1 .6"><path d="M354.80 226.20L356.80 226.20"/><path d="M354.10 227.90L355.51 229.31"/><path d="M352.40 228.60L352.40 230.60"/><path d="M350.70 227.90L349.29 229.31"/><path d="M350.00 226.20L348.00 226.20"/><path d="M350.70 224.50L349.29 223.09"/><path d="M352.40 223.80L352.40 221.80"/><path d="M354.10 224.50L355.51 223.09"/></g><circle cx="352.4" cy="226.2" r="2.2" fill="#d8d8d8" stroke="#b4b4b4" stroke-width="1.3"/><g transform="translate(368.0 224.0)"><path d="M.3 .8L.7 13.600 12.400 12.300 8.700 8.900Q14 4.400 17.600 6.600 21.400 9.400 12.200 19.300L14.600 21.300Q27 8.800 22.600 3.200 17.400 -2.600 4.600 4.600z" fill="#c4c4c4" stroke="#b4b4b4" stroke-width=".7" stroke-linejoin="round"/></g><path d="M401.5 222.5h9.9l4.600 4.600v12.9h-14.5z" fill="#fdfdfd" stroke="#8f8f8f" stroke-width="1"/><path d="M411.4 222.5v4.600h4.600" fill="#f2f2f2" stroke="#8f8f8f" stroke-width=".9"/><path d="M404.0 226.0h5M404.0 228.2h5M404.0 230.4h9.5M404.0 232.6h9.5M404.0 234.8h9.5M404.0 237.0h9.5" stroke="#8fc4ff" stroke-width="1"/><path d="M409.5 228.5h10.4l4.600 4.600v11.9h-15.0z" fill="#fdfdfd" stroke="#8f8f8f" stroke-width="1"/><path d="M419.9 228.5v4.600h4.600" fill="#f2f2f2" stroke="#8f8f8f" stroke-width=".9"/><path d="M412.0 232.0h5M412.0 234.2h5M412.0 236.4h10.0M412.0 238.6h10.0M412.0 240.8h10.0M412.0 243.0h10.0" stroke="#3fa0ff" stroke-width="1"/><rect x="429.600" y="223.600" width="19.800" height="20" rx="2.500" fill="url(#gClip)" stroke="#b07a28" stroke-width="1.100"/><rect x="435" y="222.500" width="8" height="3.600" rx="1" fill="#e6e6e6" stroke="#a2a2a2" stroke-width=".8"/><path d="M436.5 229.0h10.4l4.600 4.600v11.4h-15.0z" fill="#fdfdfd" stroke="#8f8f8f" stroke-width="1"/><path d="M446.9 229.0v4.600h4.600" fill="#f2f2f2" stroke="#8f8f8f" stroke-width=".9"/><path d="M439.0 232.5h5M439.0 234.7h5M439.0 236.9h10.0M439.0 239.1h10.0M439.0 241.3h10.0" stroke="#3fa0ff" stroke-width="1"/><rect x="463" y="225" width="24" height="5.600" fill="#000"/><rect x="463" y="237" width="24" height="5.600" fill="#000"/><rect x="500" y="222" width="5" height="23" fill="#000"/><rect x="491.200" y="231.100" width="22.800" height="4.900" fill="#000"/><path d="M523 226l16.600 16.800M539.600 226l-16.600 16.800" stroke="#000" stroke-width="4.600"/></svg>

<div class="sep" style="left:87px;top:5px;height:21px"></div>

<div class="sep" style="left:149px;top:5px;height:21px"></div>

<div class="sep" style="left:239px;top:5px;height:21px"></div>

<div class="sep" style="left:273px;top:5px;height:21px"></div>

<div class="sep" style="left:335px;top:5px;height:21px"></div>

<div class="abs" style="left:423px;top:4px;width:60px;height:23px;border:1px solid #646464;background:#fff"></div>
<span class="abs" style="left:487px;top:8px;font-size:11px;line-height:13px;font-weight:bold;color:#178a60">°</span>
</div>
<div class="ctb" style="top:31px;height:31px;background:linear-gradient(#fdfdfd,#f9f9f9 50%,#f0f0f0)">
<div class="abs" style="left:0;top:1px;width:28px;height:28px;border:1px solid #0078d7;background:#fcfdff"></div>
<div class="abs" style="left:90px;top:1px;width:28px;height:28px;border:1px solid #0078d7;background:#fcfdff"></div>
<svg style="left:0px;top:0px" width="500" height="30" viewBox="123 250 500 30"><rect x="125.8" y="255.5" width="21.5" height="19.8" rx="1.600" fill="url(#gWinBody)" stroke="#5f5f5f" stroke-width="1.100"/><path d="M125.8 257.0q0-1.600 1.600-1.600h18.3q1.600 0 1.600 1.600v2.300h-21.5z" fill="url(#gWinBar)" stroke="#5966c0" stroke-width=".9"/><rect x="153.5" y="255.5" width="22.0" height="9.0" rx="1.600" fill="url(#gWinBody)" stroke="#5f5f5f" stroke-width="1.100"/><path d="M153.5 257.0q0-1.600 1.600-1.600h18.8q1.600 0 1.600 1.600v2.300h-22.0z" fill="url(#gWinBar)" stroke="#5966c0" stroke-width=".9"/><rect x="153.5" y="266.0" width="22.0" height="9.3" rx="1.600" fill="url(#gWinBody)" stroke="#5f5f5f" stroke-width="1.100"/><path d="M153.5 267.5q0-1.600 1.600-1.600h18.8q1.600 0 1.600 1.600v2.300h-22.0z" fill="url(#gWinBar)" stroke="#5966c0" stroke-width=".9"/><rect x="181.5" y="255.5" width="10.8" height="19.8" rx="1.600" fill="url(#gWinBody)" stroke="#5f5f5f" stroke-width="1.100"/><path d="M181.5 257.0q0-1.600 1.600-1.600h7.6q1.600 0 1.600 1.600v2.300h-10.8z" fill="url(#gWinBar)" stroke="#5966c0" stroke-width=".9"/><rect x="192.7" y="255.5" width="10.8" height="19.8" rx="1.600" fill="url(#gWinBody)" stroke="#5f5f5f" stroke-width="1.100"/><path d="M192.7 257.0q0-1.600 1.600-1.600h7.6q1.600 0 1.600 1.600v2.300h-10.8z" fill="url(#gWinBar)" stroke="#5966c0" stroke-width=".9"/><rect x="215.500" y="255.500" width="22.500" height="18.200" rx="1" fill="#fff" stroke="#8f9bd6" stroke-width=".8"/><rect x="215.200" y="255.300" width="23" height="3.700" fill="#7386d8"/><rect x="215.200" y="255.300" width="7.800" height="18.600" fill="#7386d8"/><path d="M215.200 259.400h23M215.200 263.200h23M215.200 267h23M215.200 270.700h23" stroke="#aab4ea" stroke-width="1"/><path d="M223.200 255.300v18.600M230.700 255.300v18.600" stroke="#aab4ea" stroke-width="1"/><path d="M244.7 265.8L254.3 254.2q3.400-2.800 6.800 .2q2.400 3.600 4.300 9.600L257.3 276.6z" fill="url(#gSurf)"/><path d="M272.500 255v20.600h21.500" fill="none" stroke="#000" stroke-width="1.200"/><path d="M274.500 272l6.500-6.500 4.500-4 5.500 6" fill="none" stroke="#a9c2f2" stroke-width="1.300"/><path d="M274.500 267.500l5.500-7 5.800 10.500 7-13" fill="none" stroke="#1f55a8" stroke-width="1.300"/><text x="333.6" y="262.9" textLength="11.500" font-family="Liberation Serif,serif" font-weight="bold" font-size="13" fill="#62a4e4" stroke="#4a8fd6" stroke-width=".35" lengthAdjust="spacingAndGlyphs">.0</text><text x="324.6" y="275.1" textLength="20.500" font-family="Liberation Serif,serif" font-weight="bold" font-size="13" fill="#62a4e4" stroke="#4a8fd6" stroke-width=".35" lengthAdjust="spacingAndGlyphs">.00</text><path d="M323.2 259.3l3.600-3.200v1.800h4.200v2.800h-4.200v1.800z" fill="#62a4e4" stroke="#4a8fd6" stroke-width=".4"/><text x="352.5" y="262.9" textLength="20.500" font-family="Liberation Serif,serif" font-weight="bold" font-size="13" fill="#62a4e4" stroke="#4a8fd6" stroke-width=".35" lengthAdjust="spacingAndGlyphs">.00</text><text x="361.5" y="275.1" textLength="11.500" font-family="Liberation Serif,serif" font-weight="bold" font-size="13" fill="#62a4e4" stroke="#4a8fd6" stroke-width=".35" lengthAdjust="spacingAndGlyphs">.0</text><path d="M359.6 271.3l-3.600-3.200v1.800h-4.200v2.800h4.200v1.800z" fill="#62a4e4" stroke="#4a8fd6" stroke-width=".4"/><path d="M403.0 260.0v-5h5 M418.0 255.0h5v5 M423.0 270.0v5h-5 M408.0 275.0h-5v-5" fill="none" stroke="#0000ff" stroke-width="2"/><g transform="translate(403 253.200) scale(.98 .98)"><path d="M0.0 13.4L9.6 1.8q3.400-2.800 6.800 .2q2.400 3.600 4.300 9.600L12.6 24.2z" fill="url(#gSurf)"/></g><g transform="translate(431.500 253.200) scale(.98 .98)"><path d="M0.0 13.4L9.6 1.8q3.400-2.800 6.800 .2q2.400 3.600 4.300 9.600L12.6 24.2z" fill="url(#gSurf)"/></g><rect x="450.200" y="252" width="6" height="26" fill="#f6f6f6"/><path d="M431.0 255.0v20.0M451.0 255.0v20.0" stroke="#0000ff" stroke-width="2"/><g transform="translate(459 253.200) scale(.98 .98)"><path d="M0.0 13.4L9.6 1.8q3.400-2.800 6.800 .2q2.400 3.600 4.300 9.600L12.6 24.2z" fill="url(#gSurf)"/></g><path d="M459.0 255.0h20.0M459.0 275.0h20.0" stroke="#0000ff" stroke-width="2"/><path d="M487.0 260.0v-5h5 M502.0 255.0h5v5 M507.0 270.0v5h-5 M492.0 275.0h-5v-5" fill="none" stroke="#0000ff" stroke-width="2"/><rect x="490" y="258" width="14" height="14" fill="#00ff00" stroke="#000" stroke-width="2.200"/><path d="M497 259.500l5.500 5.500-5.500 5.500-5.500-5.500z" fill="#ffff00"/><path d="M491 259l12 12M503 259l-12 12" stroke="#000" stroke-width=".9"/><path d="M515.0 255.0v20.0M535.0 255.0v20.0" stroke="#0000ff" stroke-width="2"/><rect x="518" y="258" width="14" height="14" fill="#ffff00" stroke="#000" stroke-width="2.200"/><rect x="519.100" y="259.100" width="6.400" height="11.800" fill="#00ff00"/><path d="M543.0 255.0h20.0M543.0 275.0h20.0" stroke="#0000ff" stroke-width="2"/><rect x="546" y="258" width="14" height="14" fill="#ffff00" stroke="#000" stroke-width="2.200"/><rect x="547.100" y="259.100" width="11.800" height="5.400" fill="#00ff00"/></svg>

<div class="sep" style="left:87px;top:5px;height:21px"></div>



</div>
<span class="abs" id="xtitle" style="left:26px;top:64px;width:1253px;text-align:center;font-family:'DejaVu Sans',sans-serif;font-size:16.8px;line-height:20px;white-space:nowrap"><span style="text-decoration:underline;text-underline-offset:1px;text-decoration-thickness:1px;position:static">Spark RPM (rpm)</span></span>
<span class="abs" id="ytitle" style="left:-84px;top:340px;width:200px;height:20px;text-align:center;font-family:'DejaVu Sans',sans-serif;font-size:17px;line-height:20px;white-space:nowrap;letter-spacing:-.33px;transform:rotate(-90deg);transform-origin:50% 50%">Cylinder Airmass (g)</span>
<div id="grid"><div class="hline"></div><div class="vline"></div><div class="hb"></div><div class="vb"></div><table cellspacing="0" cellpadding="0"><tr class="hd"><th class="rl"></th><th>0</th><th>200</th><th>400</th><th>600</th><th>800</th><th>1,000</th><th>1,200</th><th>1,400</th><th>1,600</th><th>1,800</th><th>2,000</th><th>2,200</th><th>2,400</th><th>2,600</th><th>2,800</th><th>3,000</th><th>3,200</th><th>3,400</th><th>3,600</th><th>3,800</th><th>4,000</th><th>4,200</th><th>4,400</th><th>4,800</th><th>5,200</th><th>5,600</th><th>6,000</th><th>6,400</th><th>6,800</th><th>7,200</th><th>7,600</th><th>8,000</th><th>8,192</th></tr>
<tr><th class="rl">0.08</th><td class="sel" style="background:#ffd400">32.00</td><td style="background:#ffd400">32.00</td><td style="background:#ffd400">32.00</td><td style="background:#ffd400">32.00</td><td style="background:#ffd400">32.00</td><td style="background:#ffd400">32.00</td><td style="background:#ffd100">32.50</td><td style="background:#ffc800">34.50</td><td style="background:#ffc100">36.00</td><td style="background:#ffb300">39.00</td><td style="background:#ffa500">42.00</td><td style="background:#ffa500">42.00</td><td style="background:#ffa500">42.00</td><td style="background:#ffa500">42.00</td><td style="background:#ffa500">42.00</td><td style="background:#ffa500">42.00</td><td style="background:#ffa500">42.00</td><td style="background:#ffa500">42.00</td><td style="background:#ffa500">42.00</td><td style="background:#ffa500">42.00</td><td style="background:#ffa500">42.00</td><td style="background:#ffa500">42.00</td><td style="background:#ffa500">42.00</td><td style="background:#ffa500">42.00</td><td style="background:#ffa500">42.00</td><td style="background:#ffa500">42.00</td><td style="background:#ffa500">42.00</td><td style="background:#ffa500">42.00</td><td style="background:#ffa500">42.00</td><td style="background:#ffa500">42.00</td><td style="background:#ffa500">42.00</td><td style="background:#ffa500">42.00</td><td style="background:#ffa500">42.00</td></tr>
<tr><th class="rl">0.12</th><td style="background:#ffd400">32.00</td><td style="background:#ffd400">32.00</td><td style="background:#ffd400">32.00</td><td style="background:#ffd400">32.00</td><td style="background:#ffd400">32.00</td><td style="background:#ffd400">32.00</td><td style="background:#ffd100">32.50</td><td style="background:#ffc800">34.50</td><td style="background:#ffc100">36.00</td><td style="background:#ffb300">39.00</td><td style="background:#ffa500">42.00</td><td style="background:#ffa500">42.00</td><td style="background:#ffa500">42.00</td><td style="background:#ffa500">42.00</td><td style="background:#ffa500">42.00</td><td style="background:#ffa500">42.00</td><td style="background:#ffa500">42.00</td><td style="background:#ffa500">42.00</td><td style="background:#ffa500">42.00</td><td style="background:#ffa500">42.00</td><td style="background:#ffa500">42.00</td><td style="background:#ffa500">42.00</td><td style="background:#ffa500">42.00</td><td style="background:#ffa500">42.00</td><td style="background:#ffa500">42.00</td><td style="background:#ffa500">42.00</td><td style="background:#ffa500">42.00</td><td style="background:#ffa500">42.00</td><td style="background:#ffa500">42.00</td><td style="background:#ffa500">42.00</td><td style="background:#ffa500">42.00</td><td style="background:#ffa500">42.00</td><td style="background:#ffa500">42.00</td></tr>
<tr><th class="rl">0.16</th><td style="background:#ffd800">31.00</td><td style="background:#ffd800">31.00</td><td style="background:#ffd800">31.00</td><td style="background:#ffd800">31.00</td><td style="background:#ffd400">32.00</td><td style="background:#ffd400">32.00</td><td style="background:#ffd100">32.50</td><td style="background:#ffc800">34.50</td><td style="background:#ffc100">36.00</td><td style="background:#ffb300">39.00</td><td style="background:#ffa500">42.00</td><td style="background:#ffa500">42.00</td><td style="background:#ffa500">42.00</td><td style="background:#ffa500">42.00</td><td style="background:#ffa500">42.00</td><td style="background:#ffa500">42.00</td><td style="background:#ffa500">42.00</td><td style="background:#ffa500">42.00</td><td style="background:#ffa500">42.00</td><td style="background:#ffa500">42.00</td><td style="background:#ffa500">42.00</td><td style="background:#ffa500">42.00</td><td style="background:#ffa500">42.00</td><td style="background:#ffa500">42.00</td><td style="background:#ffa500">42.00</td><td style="background:#ffa500">42.00</td><td style="background:#ffa500">42.00</td><td style="background:#ffa500">42.00</td><td style="background:#ffa500">42.00</td><td style="background:#ffa500">42.00</td><td style="background:#ffa500">42.00</td><td style="background:#ffa500">42.00</td><td style="background:#ffa500">42.00</td></tr>
<tr><th class="rl">0.20</th><td style="background:#ffdf00">29.50</td><td style="background:#ffdf00">29.50</td><td style="background:#ffdf00">29.50</td><td style="background:#ffdd00">30.00</td><td style="background:#ffd400">32.00</td><td style="background:#ffd400">32.00</td><td style="background:#ffd100">32.50</td><td style="background:#ffc800">34.50</td><td style="background:#ffc100">36.00</td><td style="background:#ffb300">39.00</td><td style="background:#ffa500">42.00</td><td style="background:#ffa500">42.00</td><td style="background:#ffa500">42.00</td><td style="background:#ffa500">42.00</td><td style="background:#ffa500">42.00</td><td style="background:#ffa500">42.00</td><td style="background:#ffa500">42.00</td><td style="background:#ffa500">42.00</td><td style="background:#ffa500">42.00</td><td style="background:#ffa500">42.00</td><td style="background:#ffa500">42.00</td><td style="background:#ffa500">42.00</td><td style="background:#ffa500">42.00</td><td style="background:#ffa500">42.00</td><td style="background:#ffa500">42.00</td><td style="background:#ffa500">42.00</td><td style="background:#ffa500">42.00</td><td style="background:#ffa500">42.00</td><td style="background:#ffa500">42.00</td><td style="background:#ffa500">42.00</td><td style="background:#ffa500">42.00</td><td style="background:#ffa500">42.00</td><td style="background:#ffa500">42.00</td></tr>
<tr><th class="rl">0.24</th><td style="background:#ffe800">27.50</td><td style="background:#ffe800">27.50</td><td style="background:#ffe800">27.50</td><td style="background:#ffe400">28.50</td><td style="background:#ffd800">31.00</td><td style="background:#ffd400">32.00</td><td style="background:#ffd100">32.50</td><td style="background:#ffc800">34.50</td><td style="background:#ffc100">36.00</td><td style="background:#ffb300">39.00</td><td style="background:#ffac00">40.50</td><td style="background:#ffaa00">41.00</td><td style="background:#ffa700">41.50</td><td style="background:#ffa500">42.00</td><td style="background:#ffa500">42.00</td><td style="background:#ffa500">42.00</td><td style="background:#ffa500">42.00</td><td style="background:#ffa500">42.00</td><td style="background:#ffa500">42.00</td><td style="background:#ffa500">42.00</td><td style="background:#ffa500">42.00</td><td style="background:#ffa500">42.00</td><td style="background:#ffa500">42.00</td><td style="background:#ffa500">42.00</td><td style="background:#ffa500">42.00</td><td style="background:#ffa500">42.00</td><td style="background:#ffa500">42.00</td><td style="background:#ffa500">42.00</td><td style="background:#ffa500">42.00</td><td style="background:#ffa500">42.00</td><td style="background:#ffa500">42.00</td><td style="background:#ffa500">42.00</td><td style="background:#ffa500">42.00</td></tr>
<tr><th class="rl">0.28</th><td style="background:#fff200">25.50</td><td style="background:#fff200">25.50</td><td style="background:#fff200">25.50</td><td style="background:#ffeb00">27.00</td><td style="background:#ffe100">29.00</td><td style="background:#ffda00">30.50</td><td style="background:#ffd100">32.50</td><td style="background:#ffcd00">33.50</td><td style="background:#ffc600">35.00</td><td style="background:#ffc100">36.00</td><td style="background:#ffbc00">37.00</td><td style="background:#ffba00">37.50</td><td style="background:#ffb500">38.50</td><td style="background:#ffb300">39.00</td><td style="background:#ffb300">39.00</td><td style="background:#ffb100">39.50</td><td style="background:#ffae00">40.00</td><td style="background:#ffae00">40.00</td><td style="background:#ffae00">40.00</td><td style="background:#ffae00">40.00</td><td style="background:#ffae00">40.00</td><td style="background:#ffac00">40.50</td><td style="background:#ffac00">40.50</td><td style="background:#ffac00">40.50</td><td style="background:#ffac00">40.50</td><td style="background:#ffaa00">41.00</td><td style="background:#ffa500">42.00</td><td style="background:#ffa500">42.00</td><td style="background:#ffa500">42.00</td><td style="background:#ffa500">42.00</td><td style="background:#ffa500">42.00</td><td style="background:#ffa500">42.00</td><td style="background:#ffa500">42.00</td></tr>
<tr><th class="rl">0.32</th><td style="background:#fffd00">23.00</td><td style="background:#fffd00">23.00</td><td style="background:#fffd00">23.00</td><td style="background:#fff400">25.00</td><td style="background:#ffeb00">27.00</td><td style="background:#ffe400">28.50</td><td style="background:#ffdd00">30.00</td><td style="background:#ffd800">31.00</td><td style="background:#ffd100">32.50</td><td style="background:#ffcd00">33.50</td><td style="background:#ffca00">34.00</td><td style="background:#ffc600">35.00</td><td style="background:#ffc300">35.50</td><td style="background:#ffbf00">36.50</td><td style="background:#ffbc00">37.00</td><td style="background:#ffba00">37.50</td><td style="background:#ffba00">37.50</td><td style="background:#ffb800">38.00</td><td style="background:#ffb800">38.00</td><td style="background:#ffb500">38.50</td><td style="background:#ffb500">38.50</td><td style="background:#ffb500">38.50</td><td style="background:#ffb300">39.00</td><td style="background:#ffb300">39.00</td><td style="background:#ffb300">39.00</td><td style="background:#ffb100">39.50</td><td style="background:#ffae00">40.00</td><td style="background:#ffae00">40.00</td><td style="background:#ffae00">40.00</td><td style="background:#ffae00">40.00</td><td style="background:#ffae00">40.00</td><td style="background:#ffae00">40.00</td><td style="background:#ffae00">40.00</td></tr>
<tr><th class="rl">0.36</th><td style="background:#f0ff00">21.00</td><td style="background:#f0ff00">21.00</td><td style="background:#f0ff00">21.00</td><td style="background:#fffd00">23.00</td><td style="background:#fff600">24.50</td><td style="background:#ffed00">26.50</td><td style="background:#ffe800">27.50</td><td style="background:#ffe100">29.00</td><td style="background:#ffdd00">30.00</td><td style="background:#ffd600">31.50</td><td style="background:#ffd400">32.00</td><td style="background:#ffcf00">33.00</td><td style="background:#ffca00">34.00</td><td style="background:#ffc800">34.50</td><td style="background:#ffc600">35.00</td><td style="background:#ffc300">35.50</td><td style="background:#ffc100">36.00</td><td style="background:#ffbf00">36.50</td><td style="background:#ffbf00">36.50</td><td style="background:#ffbc00">37.00</td><td style="background:#ffbc00">37.00</td><td style="background:#ffba00">37.50</td><td style="background:#ffba00">37.50</td><td style="background:#ffba00">37.50</td><td style="background:#ffba00">37.50</td><td style="background:#ffb800">38.00</td><td style="background:#ffb800">38.00</td><td style="background:#ffb800">38.00</td><td style="background:#ffb800">38.00</td><td style="background:#ffb800">38.00</td><td style="background:#ffb800">38.00</td><td style="background:#ffb800">38.00</td><td style="background:#ffb800">38.00</td></tr>
<tr><th class="rl">0.40</th><td style="background:#94ff00">11.00</td><td style="background:#94ff00">11.00</td><td style="background:#94ff00">11.00</td><td style="background:#9dff00">12.00</td><td style="background:#c2ff00">16.00</td><td style="background:#cbff00">17.00</td><td style="background:#fff400">25.00</td><td style="background:#ffed00">26.50</td><td style="background:#ffe800">27.50</td><td style="background:#ffe100">29.00</td><td style="background:#ffda00">30.50</td><td style="background:#ffd600">31.50</td><td style="background:#ffd100">32.50</td><td style="background:#ffcf00">33.00</td><td style="background:#ffca00">34.00</td><td style="background:#ffc800">34.50</td><td style="background:#ffc800">34.50</td><td style="background:#ffc600">35.00</td><td style="background:#ffc300">35.50</td><td style="background:#ffc300">35.50</td><td style="background:#ffc100">36.00</td><td style="background:#ffc100">36.00</td><td style="background:#ffc100">36.00</td><td style="background:#ffc100">36.00</td><td style="background:#ffc100">36.00</td><td style="background:#ffc100">36.00</td><td style="background:#ffbf00">36.50</td><td style="background:#ffbf00">36.50</td><td style="background:#ffbf00">36.50</td><td style="background:#ffbf00">36.50</td><td style="background:#ffbf00">36.50</td><td style="background:#ffbf00">36.50</td><td style="background:#ffbf00">36.50</td></tr>
<tr><th class="rl">0.44</th><td style="background:#7dff00">8.50</td><td style="background:#7dff00">8.50</td><td style="background:#7dff00">8.50</td><td style="background:#8aff00">10.00</td><td style="background:#abff00">13.50</td><td style="background:#b8ff00">15.00</td><td style="background:#feff00">22.50</td><td style="background:#fff900">24.00</td><td style="background:#fff200">25.50</td><td style="background:#ffeb00">27.00</td><td style="background:#ffe100">29.00</td><td style="background:#ffda00">30.50</td><td style="background:#ffd600">31.50</td><td style="background:#ffd400">32.00</td><td style="background:#ffcf00">33.00</td><td style="background:#ffcd00">33.50</td><td style="background:#ffca00">34.00</td><td style="background:#ffca00">34.00</td><td style="background:#ffc800">34.50</td><td style="background:#ffc800">34.50</td><td style="background:#ffc800">34.50</td><td style="background:#ffc600">35.00</td><td style="background:#ffc600">35.00</td><td style="background:#ffc600">35.00</td><td style="background:#ffc800">34.50</td><td style="background:#ffc800">34.50</td><td style="background:#ffc800">34.50</td><td style="background:#ffc800">34.50</td><td style="background:#ffc800">34.50</td><td style="background:#ffc800">34.50</td><td style="background:#ffc800">34.50</td><td style="background:#ffc800">34.50</td><td style="background:#ffc800">34.50</td></tr>
<tr><th class="rl">0.48</th><td style="background:#6aff00">6.50</td><td style="background:#6aff00">6.50</td><td style="background:#6aff00">6.50</td><td style="background:#78ff00">8.00</td><td style="background:#94ff00">11.00</td><td style="background:#a1ff00">12.50</td><td style="background:#e2ff00">19.50</td><td style="background:#f9ff00">22.00</td><td style="background:#fffb00">23.50</td><td style="background:#fff400">25.00</td><td style="background:#ffe800">27.50</td><td style="background:#ffdd00">30.00</td><td style="background:#ffda00">30.50</td><td style="background:#ffd600">31.50</td><td style="background:#ffd400">32.00</td><td style="background:#ffd100">32.50</td><td style="background:#ffcf00">33.00</td><td style="background:#ffcd00">33.50</td><td style="background:#ffcd00">33.50</td><td style="background:#ffcd00">33.50</td><td style="background:#ffcd00">33.50</td><td style="background:#ffcd00">33.50</td><td style="background:#ffcd00">33.50</td><td style="background:#ffcd00">33.50</td><td style="background:#ffcd00">33.50</td><td style="background:#ffcf00">33.00</td><td style="background:#ffcf00">33.00</td><td style="background:#ffcf00">33.00</td><td style="background:#ffcf00">33.00</td><td style="background:#ffcf00">33.00</td><td style="background:#ffcf00">33.00</td><td style="background:#ffcf00">33.00</td><td style="background:#ffcf00">33.00</td></tr>
<tr><th class="rl">0.52</th><td style="background:#65ff00">6.00</td><td style="background:#65ff00">6.00</td><td style="background:#65ff00">6.00</td><td style="background:#6fff00">7.00</td><td style="background:#8aff00">10.00</td><td style="background:#9dff00">12.00</td><td style="background:#cbff00">17.00</td><td style="background:#e7ff00">20.00</td><td style="background:#f9ff00">22.00</td><td style="background:#fffb00">23.50</td><td style="background:#ffef00">26.00</td><td style="background:#ffe600">28.00</td><td style="background:#ffdd00">30.00</td><td style="background:#ffd800">31.00</td><td style="background:#ffd600">31.50</td><td style="background:#ffd400">32.00</td><td style="background:#ffd100">32.50</td><td style="background:#ffd100">32.50</td><td style="background:#ffd100">32.50</td><td style="background:#ffcf00">33.00</td><td style="background:#ffd100">32.50</td><td style="background:#ffd100">32.50</td><td style="background:#ffd100">32.50</td><td style="background:#ffd400">32.00</td><td style="background:#ffd400">32.00</td><td style="background:#ffd600">31.50</td><td style="background:#ffd600">31.50</td><td style="background:#ffd600">31.50</td><td style="background:#ffd600">31.50</td><td style="background:#ffd600">31.50</td><td style="background:#ffd600">31.50</td><td style="background:#ffd600">31.50</td><td style="background:#ffd600">31.50</td></tr>
<tr><th class="rl">0.56</th><td style="background:#4aff00">3.00</td><td style="background:#4aff00">3.00</td><td style="background:#4aff00">3.00</td><td style="background:#6aff00">6.50</td><td style="background:#86ff00">9.50</td><td style="background:#9dff00">12.00</td><td style="background:#b8ff00">15.00</td><td style="background:#d4ff00">18.00</td><td style="background:#ebff00">20.50</td><td style="background:#f9ff00">22.00</td><td style="background:#fff400">25.00</td><td style="background:#ffe800">27.50</td><td style="background:#ffdf00">29.50</td><td style="background:#ffdd00">30.00</td><td style="background:#ffd800">31.00</td><td style="background:#ffd600">31.50</td><td style="background:#ffd600">31.50</td><td style="background:#ffd400">32.00</td><td style="background:#ffd400">32.00</td><td style="background:#ffd400">32.00</td><td style="background:#ffd600">31.50</td><td style="background:#ffd600">31.50</td><td style="background:#ffd600">31.50</td><td style="background:#ffd800">31.00</td><td style="background:#ffda00">30.50</td><td style="background:#ffdd00">30.00</td><td style="background:#ffdd00">30.00</td><td style="background:#ffdd00">30.00</td><td style="background:#ffdd00">30.00</td><td style="background:#ffdd00">30.00</td><td style="background:#ffdd00">30.00</td><td style="background:#ffdd00">30.00</td><td style="background:#ffdd00">30.00</td></tr>
<tr><th class="rl">0.60</th><td style="background:#2aff00">-0.50</td><td style="background:#2aff00">-0.50</td><td style="background:#2aff00">-0.50</td><td style="background:#4eff00">3.50</td><td style="background:#6aff00">6.50</td><td style="background:#8aff00">10.00</td><td style="background:#a6ff00">13.00</td><td style="background:#c2ff00">16.00</td><td style="background:#ddff00">19.00</td><td style="background:#ebff00">20.50</td><td style="background:#fff900">24.00</td><td style="background:#ffed00">26.50</td><td style="background:#ffe400">28.50</td><td style="background:#ffdf00">29.50</td><td style="background:#ffdd00">30.00</td><td style="background:#ffda00">30.50</td><td style="background:#ffd800">31.00</td><td style="background:#ffd800">31.00</td><td style="background:#ffd800">31.00</td><td style="background:#ffd800">31.00</td><td style="background:#ffda00">30.50</td><td style="background:#ffda00">30.50</td><td style="background:#ffdd00">30.00</td><td style="background:#ffdf00">29.50</td><td style="background:#ffe100">29.00</td><td style="background:#ffe100">29.00</td><td style="background:#ffe100">29.00</td><td style="background:#ffe100">29.00</td><td style="background:#ffe100">29.00</td><td style="background:#ffe100">29.00</td><td style="background:#ffe100">29.00</td><td style="background:#ffe100">29.00</td><td style="background:#ffe100">29.00</td></tr>
<tr><th class="rl">0.64</th><td style="background:#05ff00">-4.50</td><td style="background:#05ff00">-4.50</td><td style="background:#05ff00">-4.50</td><td style="background:#33ff00">0.50</td><td style="background:#53ff00">4.00</td><td style="background:#73ff00">7.50</td><td style="background:#8fff00">10.50</td><td style="background:#afff00">14.00</td><td style="background:#cbff00">17.00</td><td style="background:#ddff00">19.00</td><td style="background:#feff00">22.50</td><td style="background:#fff400">25.00</td><td style="background:#ffeb00">27.00</td><td style="background:#ffe600">28.00</td><td style="background:#ffe100">29.00</td><td style="background:#ffdf00">29.50</td><td style="background:#ffdd00">30.00</td><td style="background:#ffdd00">30.00</td><td style="background:#ffdd00">30.00</td><td style="background:#ffdd00">30.00</td><td style="background:#ffdf00">29.50</td><td style="background:#ffdf00">29.50</td><td style="background:#ffe100">29.00</td><td style="background:#ffe400">28.50</td><td style="background:#ffe600">28.00</td><td style="background:#ffe800">27.50</td><td style="background:#ffe800">27.50</td><td style="background:#ffe800">27.50</td><td style="background:#ffe800">27.50</td><td style="background:#ffe800">27.50</td><td style="background:#ffe800">27.50</td><td style="background:#ffe800">27.50</td><td style="background:#ffe800">27.50</td></tr>
<tr><th class="rl">0.68</th><td style="background:#00ff00">-5.00</td><td style="background:#00ff00">-5.00</td><td style="background:#00ff00">-5.00</td><td style="background:#1cff00">-2.00</td><td style="background:#3cff00">1.50</td><td style="background:#5cff00">5.00</td><td style="background:#78ff00">8.00</td><td style="background:#98ff00">11.50</td><td style="background:#b8ff00">15.00</td><td style="background:#cbff00">17.00</td><td style="background:#ebff00">20.50</td><td style="background:#fffb00">23.50</td><td style="background:#fff200">25.50</td><td style="background:#ffed00">26.50</td><td style="background:#ffe800">27.50</td><td style="background:#ffe600">28.00</td><td style="background:#ffe400">28.50</td><td style="background:#ffe400">28.50</td><td style="background:#ffe400">28.50</td><td style="background:#ffe400">28.50</td><td style="background:#ffe400">28.50</td><td style="background:#ffe600">28.00</td><td style="background:#ffe600">28.00</td><td style="background:#ffeb00">27.00</td><td style="background:#ffed00">26.50</td><td style="background:#ffef00">26.00</td><td style="background:#ffef00">26.00</td><td style="background:#ffef00">26.00</td><td style="background:#ffef00">26.00</td><td style="background:#ffef00">26.00</td><td style="background:#ffef00">26.00</td><td style="background:#ffef00">26.00</td><td style="background:#ffef00">26.00</td></tr>
<tr><th class="rl">0.72</th><td style="background:#00ff00">-5.00</td><td style="background:#00ff00">-5.00</td><td style="background:#00ff00">-5.00</td><td style="background:#00ff00">-5.00</td><td style="background:#20ff00">-1.50</td><td style="background:#41ff00">2.00</td><td style="background:#61ff00">5.50</td><td style="background:#86ff00">9.50</td><td style="background:#a1ff00">12.50</td><td style="background:#bdff00">15.50</td><td style="background:#d4ff00">18.00</td><td style="background:#f0ff00">21.00</td><td style="background:#fffd00">23.00</td><td style="background:#fff600">24.50</td><td style="background:#fff200">25.50</td><td style="background:#ffef00">26.00</td><td style="background:#ffed00">26.50</td><td style="background:#ffeb00">27.00</td><td style="background:#ffeb00">27.00</td><td style="background:#ffeb00">27.00</td><td style="background:#ffeb00">27.00</td><td style="background:#ffed00">26.50</td><td style="background:#ffed00">26.50</td><td style="background:#ffef00">26.00</td><td style="background:#fff200">25.50</td><td style="background:#fff600">24.50</td><td style="background:#fff600">24.50</td><td style="background:#fff600">24.50</td><td style="background:#fff600">24.50</td><td style="background:#fff600">24.50</td><td style="background:#fff600">24.50</td><td style="background:#fff600">24.50</td><td style="background:#fff600">24.50</td></tr>
<tr><th class="rl">0.76</th><td style="background:#00ff00">-5.00</td><td style="background:#00ff00">-5.00</td><td style="background:#00ff00">-5.00</td><td style="background:#00ff00">-5.00</td><td style="background:#00ff00">-5.00</td><td style="background:#2aff00">-0.50</td><td style="background:#4eff00">3.50</td><td style="background:#73ff00">7.50</td><td style="background:#94ff00">11.00</td><td style="background:#afff00">14.00</td><td style="background:#c2ff00">16.00</td><td style="background:#d9ff00">18.50</td><td style="background:#e7ff00">20.00</td><td style="background:#f9ff00">22.00</td><td style="background:#fffd00">23.00</td><td style="background:#fffb00">23.50</td><td style="background:#fff900">24.00</td><td style="background:#fff600">24.50</td><td style="background:#fff400">25.00</td><td style="background:#fff400">25.00</td><td style="background:#fff400">25.00</td><td style="background:#fff400">25.00</td><td style="background:#fff400">25.00</td><td style="background:#fff600">24.50</td><td style="background:#fff900">24.00</td><td style="background:#fffd00">23.00</td><td style="background:#fffd00">23.00</td><td style="background:#fffd00">23.00</td><td style="background:#fffd00">23.00</td><td style="background:#fffd00">23.00</td><td style="background:#fffd00">23.00</td><td style="background:#fffd00">23.00</td><td style="background:#fffd00">23.00</td></tr>
<tr><th class="rl">0.80</th><td style="background:#00ff00">-5.00</td><td style="background:#00ff00">-5.00</td><td style="background:#00ff00">-5.00</td><td style="background:#00ff00">-5.00</td><td style="background:#00ff00">-5.00</td><td style="background:#2aff00">-0.50</td><td style="background:#4eff00">3.50</td><td style="background:#73ff00">7.50</td><td style="background:#94ff00">11.00</td><td style="background:#afff00">14.00</td><td style="background:#c2ff00">16.00</td><td style="background:#c6ff00">16.50</td><td style="background:#cbff00">17.00</td><td style="background:#ddff00">19.00</td><td style="background:#ebff00">20.50</td><td style="background:#f0ff00">21.00</td><td style="background:#f4ff00">21.50</td><td style="background:#f9ff00">22.00</td><td style="background:#feff00">22.50</td><td style="background:#fffd00">23.00</td><td style="background:#fffd00">23.00</td><td style="background:#fffb00">23.50</td><td style="background:#fffb00">23.50</td><td style="background:#fffb00">23.50</td><td style="background:#fffd00">23.00</td><td style="background:#f9ff00">22.00</td><td style="background:#f9ff00">22.00</td><td style="background:#f9ff00">22.00</td><td style="background:#f9ff00">22.00</td><td style="background:#f9ff00">22.00</td><td style="background:#f9ff00">22.00</td><td style="background:#f9ff00">22.00</td><td style="background:#f9ff00">22.00</td></tr>
<tr><th class="rl">0.84</th><td style="background:#00ff00">-5.00</td><td style="background:#00ff00">-5.00</td><td style="background:#00ff00">-5.00</td><td style="background:#00ff00">-5.00</td><td style="background:#00ff00">-5.00</td><td style="background:#2aff00">-0.50</td><td style="background:#4eff00">3.50</td><td style="background:#73ff00">7.50</td><td style="background:#94ff00">11.00</td><td style="background:#afff00">14.00</td><td style="background:#c2ff00">16.00</td><td style="background:#c6ff00">16.50</td><td style="background:#cbff00">17.00</td><td style="background:#ddff00">19.00</td><td style="background:#ebff00">20.50</td><td style="background:#ebff00">20.50</td><td style="background:#ebff00">20.50</td><td style="background:#ebff00">20.50</td><td style="background:#ebff00">20.50</td><td style="background:#f0ff00">21.00</td><td style="background:#f0ff00">21.00</td><td style="background:#f4ff00">21.50</td><td style="background:#f9ff00">22.00</td><td style="background:#feff00">22.50</td><td style="background:#f9ff00">22.00</td><td style="background:#ebff00">20.50</td><td style="background:#ebff00">20.50</td><td style="background:#ebff00">20.50</td><td style="background:#ebff00">20.50</td><td style="background:#ebff00">20.50</td><td style="background:#ebff00">20.50</td><td style="background:#ebff00">20.50</td><td style="background:#ebff00">20.50</td></tr>
<tr><th class="rl">0.88</th><td style="background:#00ff00">-5.00</td><td style="background:#00ff00">-5.00</td><td style="background:#00ff00">-5.00</td><td style="background:#00ff00">-5.00</td><td style="background:#00ff00">-5.00</td><td style="background:#2aff00">-0.50</td><td style="background:#4eff00">3.50</td><td style="background:#73ff00">7.50</td><td style="background:#94ff00">11.00</td><td style="background:#afff00">14.00</td><td style="background:#c2ff00">16.00</td><td style="background:#c6ff00">16.50</td><td style="background:#cbff00">17.00</td><td style="background:#ddff00">19.00</td><td style="background:#ebff00">20.50</td><td style="background:#ebff00">20.50</td><td style="background:#ebff00">20.50</td><td style="background:#ebff00">20.50</td><td style="background:#ebff00">20.50</td><td style="background:#ebff00">20.50</td><td style="background:#ebff00">20.50</td><td style="background:#ebff00">20.50</td><td style="background:#ebff00">20.50</td><td style="background:#f4ff00">21.50</td><td style="background:#f0ff00">21.00</td><td style="background:#e2ff00">19.50</td><td style="background:#e2ff00">19.50</td><td style="background:#e2ff00">19.50</td><td style="background:#e2ff00">19.50</td><td style="background:#e2ff00">19.50</td><td style="background:#e2ff00">19.50</td><td style="background:#e2ff00">19.50</td><td style="background:#e2ff00">19.50</td></tr>
<tr><th class="rl">0.92</th><td style="background:#00ff00">-5.00</td><td style="background:#00ff00">-5.00</td><td style="background:#00ff00">-5.00</td><td style="background:#00ff00">-5.00</td><td style="background:#00ff00">-5.00</td><td style="background:#2aff00">-0.50</td><td style="background:#4eff00">3.50</td><td style="background:#73ff00">7.50</td><td style="background:#94ff00">11.00</td><td style="background:#afff00">14.00</td><td style="background:#c2ff00">16.00</td><td style="background:#c6ff00">16.50</td><td style="background:#cbff00">17.00</td><td style="background:#ddff00">19.00</td><td style="background:#ebff00">20.50</td><td style="background:#ebff00">20.50</td><td style="background:#ebff00">20.50</td><td style="background:#ebff00">20.50</td><td style="background:#ebff00">20.50</td><td style="background:#ebff00">20.50</td><td style="background:#ebff00">20.50</td><td style="background:#ebff00">20.50</td><td style="background:#ebff00">20.50</td><td style="background:#f4ff00">21.50</td><td style="background:#f0ff00">21.00</td><td style="background:#e2ff00">19.50</td><td style="background:#e2ff00">19.50</td><td style="background:#e2ff00">19.50</td><td style="background:#e2ff00">19.50</td><td style="background:#e2ff00">19.50</td><td style="background:#e2ff00">19.50</td><td style="background:#e2ff00">19.50</td><td style="background:#e2ff00">19.50</td></tr>
<tr><th class="rl">0.96</th><td style="background:#00ff00">-5.00</td><td style="background:#00ff00">-5.00</td><td style="background:#00ff00">-5.00</td><td style="background:#00ff00">-5.00</td><td style="background:#00ff00">-5.00</td><td style="background:#2aff00">-0.50</td><td style="background:#4eff00">3.50</td><td style="background:#73ff00">7.50</td><td style="background:#94ff00">11.00</td><td style="background:#afff00">14.00</td><td style="background:#c2ff00">16.00</td><td style="background:#c6ff00">16.50</td><td style="background:#cbff00">17.00</td><td style="background:#ddff00">19.00</td><td style="background:#ebff00">20.50</td><td style="background:#ebff00">20.50</td><td style="background:#ebff00">20.50</td><td style="background:#ebff00">20.50</td><td style="background:#ebff00">20.50</td><td style="background:#ebff00">20.50</td><td style="background:#ebff00">20.50</td><td style="background:#ebff00">20.50</td><td style="background:#ebff00">20.50</td><td style="background:#f4ff00">21.50</td><td style="background:#f0ff00">21.00</td><td style="background:#e2ff00">19.50</td><td style="background:#e2ff00">19.50</td><td style="background:#e2ff00">19.50</td><td style="background:#e2ff00">19.50</td><td style="background:#e2ff00">19.50</td><td style="background:#e2ff00">19.50</td><td style="background:#e2ff00">19.50</td><td style="background:#e2ff00">19.50</td></tr>
<tr><th class="rl">1.00</th><td style="background:#00ff00">-5.00</td><td style="background:#00ff00">-5.00</td><td style="background:#00ff00">-5.00</td><td style="background:#00ff00">-5.00</td><td style="background:#00ff00">-5.00</td><td style="background:#2aff00">-0.50</td><td style="background:#4eff00">3.50</td><td style="background:#73ff00">7.50</td><td style="background:#94ff00">11.00</td><td style="background:#afff00">14.00</td><td style="background:#c2ff00">16.00</td><td style="background:#c6ff00">16.50</td><td style="background:#cbff00">17.00</td><td style="background:#ddff00">19.00</td><td style="background:#ebff00">20.50</td><td style="background:#ebff00">20.50</td><td style="background:#ebff00">20.50</td><td style="background:#ebff00">20.50</td><td style="background:#ebff00">20.50</td><td style="background:#ebff00">20.50</td><td style="background:#ebff00">20.50</td><td style="background:#ebff00">20.50</td><td style="background:#ebff00">20.50</td><td style="background:#f4ff00">21.50</td><td style="background:#f0ff00">21.00</td><td style="background:#e2ff00">19.50</td><td style="background:#e2ff00">19.50</td><td style="background:#e2ff00">19.50</td><td style="background:#e2ff00">19.50</td><td style="background:#e2ff00">19.50</td><td style="background:#e2ff00">19.50</td><td style="background:#e2ff00">19.50</td><td style="background:#e2ff00">19.50</td></tr>
<tr><th class="rl">1.04</th><td style="background:#00ff00">-5.00</td><td style="background:#00ff00">-5.00</td><td style="background:#00ff00">-5.00</td><td style="background:#00ff00">-5.00</td><td style="background:#00ff00">-5.00</td><td style="background:#2aff00">-0.50</td><td style="background:#4eff00">3.50</td><td style="background:#73ff00">7.50</td><td style="background:#94ff00">11.00</td><td style="background:#afff00">14.00</td><td style="background:#c2ff00">16.00</td><td style="background:#c6ff00">16.50</td><td style="background:#cbff00">17.00</td><td style="background:#ddff00">19.00</td><td style="background:#ebff00">20.50</td><td style="background:#ebff00">20.50</td><td style="background:#ebff00">20.50</td><td style="background:#ebff00">20.50</td><td style="background:#ebff00">20.50</td><td style="background:#ebff00">20.50</td><td style="background:#ebff00">20.50</td><td style="background:#ebff00">20.50</td><td style="background:#ebff00">20.50</td><td style="background:#f4ff00">21.50</td><td style="background:#f0ff00">21.00</td><td style="background:#e2ff00">19.50</td><td style="background:#e2ff00">19.50</td><td style="background:#e2ff00">19.50</td><td style="background:#e2ff00">19.50</td><td style="background:#e2ff00">19.50</td><td style="background:#e2ff00">19.50</td><td style="background:#e2ff00">19.50</td><td style="background:#e2ff00">19.50</td></tr>
<tr><th class="rl">1.08</th><td style="background:#00ff00">-5.00</td><td style="background:#00ff00">-5.00</td><td style="background:#00ff00">-5.00</td><td style="background:#00ff00">-5.00</td><td style="background:#00ff00">-5.00</td><td style="background:#2aff00">-0.50</td><td style="background:#4eff00">3.50</td><td style="background:#73ff00">7.50</td><td style="background:#94ff00">11.00</td><td style="background:#afff00">14.00</td><td style="background:#c2ff00">16.00</td><td style="background:#c6ff00">16.50</td><td style="background:#cbff00">17.00</td><td style="background:#ddff00">19.00</td><td style="background:#ebff00">20.50</td><td style="background:#ebff00">20.50</td><td style="background:#ebff00">20.50</td><td style="background:#ebff00">20.50</td><td style="background:#ebff00">20.50</td><td style="background:#ebff00">20.50</td><td style="background:#ebff00">20.50</td><td style="background:#ebff00">20.50</td><td style="background:#ebff00">20.50</td><td style="background:#f4ff00">21.50</td><td style="background:#f0ff00">21.00</td><td style="background:#e2ff00">19.50</td><td style="background:#e2ff00">19.50</td><td style="background:#e2ff00">19.50</td><td style="background:#e2ff00">19.50</td><td style="background:#e2ff00">19.50</td><td style="background:#e2ff00">19.50</td><td style="background:#e2ff00">19.50</td><td style="background:#e2ff00">19.50</td></tr>
<tr><th class="rl">1.12</th><td style="background:#00ff00">-5.00</td><td style="background:#00ff00">-5.00</td><td style="background:#00ff00">-5.00</td><td style="background:#00ff00">-5.00</td><td style="background:#00ff00">-5.00</td><td style="background:#2aff00">-0.50</td><td style="background:#4eff00">3.50</td><td style="background:#73ff00">7.50</td><td style="background:#94ff00">11.00</td><td style="background:#afff00">14.00</td><td style="background:#c2ff00">16.00</td><td style="background:#c6ff00">16.50</td><td style="background:#cbff00">17.00</td><td style="background:#ddff00">19.00</td><td style="background:#ebff00">20.50</td><td style="background:#ebff00">20.50</td><td style="background:#ebff00">20.50</td><td style="background:#ebff00">20.50</td><td style="background:#ebff00">20.50</td><td style="background:#ebff00">20.50</td><td style="background:#ebff00">20.50</td><td style="background:#ebff00">20.50</td><td style="background:#ebff00">20.50</td><td style="background:#f4ff00">21.50</td><td style="background:#f0ff00">21.00</td><td style="background:#e2ff00">19.50</td><td style="background:#e2ff00">19.50</td><td style="background:#e2ff00">19.50</td><td style="background:#e2ff00">19.50</td><td style="background:#e2ff00">19.50</td><td style="background:#e2ff00">19.50</td><td style="background:#e2ff00">19.50</td><td style="background:#e2ff00">19.50</td></tr>
<tr><th class="rl">1.16</th><td style="background:#00ff00">-5.00</td><td style="background:#00ff00">-5.00</td><td style="background:#00ff00">-5.00</td><td style="background:#00ff00">-5.00</td><td style="background:#00ff00">-5.00</td><td style="background:#2aff00">-0.50</td><td style="background:#4eff00">3.50</td><td style="background:#73ff00">7.50</td><td style="background:#94ff00">11.00</td><td style="background:#afff00">14.00</td><td style="background:#c2ff00">16.00</td><td style="background:#c6ff00">16.50</td><td style="background:#cbff00">17.00</td><td style="background:#ddff00">19.00</td><td style="background:#ebff00">20.50</td><td style="background:#ebff00">20.50</td><td style="background:#ebff00">20.50</td><td style="background:#ebff00">20.50</td><td style="background:#ebff00">20.50</td><td style="background:#ebff00">20.50</td><td style="background:#ebff00">20.50</td><td style="background:#ebff00">20.50</td><td style="background:#ebff00">20.50</td><td style="background:#f4ff00">21.50</td><td style="background:#f0ff00">21.00</td><td style="background:#e2ff00">19.50</td><td style="background:#e2ff00">19.50</td><td style="background:#e2ff00">19.50</td><td style="background:#e2ff00">19.50</td><td style="background:#e2ff00">19.50</td><td style="background:#e2ff00">19.50</td><td style="background:#e2ff00">19.50</td><td style="background:#e2ff00">19.50</td></tr>
<tr><th class="rl">1.20</th><td style="background:#00ff00">-5.00</td><td style="background:#00ff00">-5.00</td><td style="background:#00ff00">-5.00</td><td style="background:#00ff00">-5.00</td><td style="background:#00ff00">-5.00</td><td style="background:#2aff00">-0.50</td><td style="background:#4eff00">3.50</td><td style="background:#73ff00">7.50</td><td style="background:#94ff00">11.00</td><td style="background:#afff00">14.00</td><td style="background:#c2ff00">16.00</td><td style="background:#c6ff00">16.50</td><td style="background:#cbff00">17.00</td><td style="background:#ddff00">19.00</td><td style="background:#ebff00">20.50</td><td style="background:#ebff00">20.50</td><td style="background:#ebff00">20.50</td><td style="background:#ebff00">20.50</td><td style="background:#ebff00">20.50</td><td style="background:#ebff00">20.50</td><td style="background:#ebff00">20.50</td><td style="background:#ebff00">20.50</td><td style="background:#ebff00">20.50</td><td style="background:#f4ff00">21.50</td><td style="background:#f0ff00">21.00</td><td style="background:#e2ff00">19.50</td><td style="background:#e2ff00">19.50</td><td style="background:#e2ff00">19.50</td><td style="background:#e2ff00">19.50</td><td style="background:#e2ff00">19.50</td><td style="background:#e2ff00">19.50</td><td style="background:#e2ff00">19.50</td><td style="background:#e2ff00">19.50</td></tr>
<tr><th class="rl">1.24</th><td style="background:#00ff00">-5.00</td><td style="background:#00ff00">-5.00</td><td style="background:#00ff00">-5.00</td><td style="background:#00ff00">-5.00</td><td style="background:#00ff00">-5.00</td><td style="background:#2aff00">-0.50</td><td style="background:#4eff00">3.50</td><td style="background:#73ff00">7.50</td><td style="background:#94ff00">11.00</td><td style="background:#afff00">14.00</td><td style="background:#c2ff00">16.00</td><td style="background:#c6ff00">16.50</td><td style="background:#cbff00">17.00</td><td style="background:#ddff00">19.00</td><td style="background:#ebff00">20.50</td><td style="background:#ebff00">20.50</td><td style="background:#ebff00">20.50</td><td style="background:#ebff00">20.50</td><td style="background:#ebff00">20.50</td><td style="background:#ebff00">20.50</td><td style="background:#ebff00">20.50</td><td style="background:#ebff00">20.50</td><td style="background:#ebff00">20.50</td><td style="background:#f4ff00">21.50</td><td style="background:#f0ff00">21.00</td><td style="background:#e2ff00">19.50</td><td style="background:#e2ff00">19.50</td><td style="background:#e2ff00">19.50</td><td style="background:#e2ff00">19.50</td><td style="background:#e2ff00">19.50</td><td style="background:#e2ff00">19.50</td><td style="background:#e2ff00">19.50</td><td style="background:#e2ff00">19.50</td></tr>
<tr><th class="rl">1.28</th><td style="background:#00ff00">-5.00</td><td style="background:#00ff00">-5.00</td><td style="background:#00ff00">-5.00</td><td style="background:#00ff00">-5.00</td><td style="background:#00ff00">-5.00</td><td style="background:#2aff00">-0.50</td><td style="background:#4eff00">3.50</td><td style="background:#73ff00">7.50</td><td style="background:#94ff00">11.00</td><td style="background:#afff00">14.00</td><td style="background:#c2ff00">16.00</td><td style="background:#c6ff00">16.50</td><td style="background:#cbff00">17.00</td><td style="background:#ddff00">19.00</td><td style="background:#ebff00">20.50</td><td style="background:#ebff00">20.50</td><td style="background:#ebff00">20.50</td><td style="background:#ebff00">20.50</td><td style="background:#ebff00">20.50</td><td style="background:#ebff00">20.50</td><td style="background:#ebff00">20.50</td><td style="background:#ebff00">20.50</td><td style="background:#ebff00">20.50</td><td style="background:#f4ff00">21.50</td><td style="background:#f0ff00">21.00</td><td style="background:#e2ff00">19.50</td><td style="background:#e2ff00">19.50</td><td style="background:#e2ff00">19.50</td><td style="background:#e2ff00">19.50</td><td style="background:#e2ff00">19.50</td><td style="background:#e2ff00">19.50</td><td style="background:#e2ff00">19.50</td><td style="background:#e2ff00">19.50</td></tr>
<tr><th class="rl">1.32</th><td style="background:#00ff00">-5.00</td><td style="background:#00ff00">-5.00</td><td style="background:#00ff00">-5.00</td><td style="background:#00ff00">-5.00</td><td style="background:#00ff00">-5.00</td><td style="background:#2aff00">-0.50</td><td style="background:#4eff00">3.50</td><td style="background:#73ff00">7.50</td><td style="background:#94ff00">11.00</td><td style="background:#afff00">14.00</td><td style="background:#c2ff00">16.00</td><td style="background:#c6ff00">16.50</td><td style="background:#cbff00">17.00</td><td style="background:#ddff00">19.00</td><td style="background:#ebff00">20.50</td><td style="background:#ebff00">20.50</td><td style="background:#ebff00">20.50</td><td style="background:#ebff00">20.50</td><td style="background:#ebff00">20.50</td><td style="background:#ebff00">20.50</td><td style="background:#ebff00">20.50</td><td style="background:#ebff00">20.50</td><td style="background:#ebff00">20.50</td><td style="background:#f4ff00">21.50</td><td style="background:#f0ff00">21.00</td><td style="background:#e2ff00">19.50</td><td style="background:#e2ff00">19.50</td><td style="background:#e2ff00">19.50</td><td style="background:#e2ff00">19.50</td><td style="background:#e2ff00">19.50</td><td style="background:#e2ff00">19.50</td><td style="background:#e2ff00">19.50</td><td style="background:#e2ff00">19.50</td></tr>
<tr><th class="rl">1.36</th><td style="background:#00ff00">-5.00</td><td style="background:#00ff00">-5.00</td><td style="background:#00ff00">-5.00</td><td style="background:#00ff00">-5.00</td><td style="background:#00ff00">-5.00</td><td style="background:#2aff00">-0.50</td><td style="background:#4eff00">3.50</td><td style="background:#73ff00">7.50</td><td style="background:#94ff00">11.00</td><td style="background:#afff00">14.00</td><td style="background:#c2ff00">16.00</td><td style="background:#c6ff00">16.50</td><td style="background:#cbff00">17.00</td><td style="background:#ddff00">19.00</td><td style="background:#ebff00">20.50</td><td style="background:#ebff00">20.50</td><td style="background:#ebff00">20.50</td><td style="background:#ebff00">20.50</td><td style="background:#ebff00">20.50</td><td style="background:#ebff00">20.50</td><td style="background:#ebff00">20.50</td><td style="background:#ebff00">20.50</td><td style="background:#ebff00">20.50</td><td style="background:#f4ff00">21.50</td><td style="background:#f0ff00">21.00</td><td style="background:#e2ff00">19.50</td><td style="background:#e2ff00">19.50</td><td style="background:#e2ff00">19.50</td><td style="background:#e2ff00">19.50</td><td style="background:#e2ff00">19.50</td><td style="background:#e2ff00">19.50</td><td style="background:#e2ff00">19.50</td><td style="background:#e2ff00">19.50</td></tr>
</table></div>
</div>
</div>
<div id="desc"><span class="abs" style="left:3px;top:2px;white-space:nowrap">[ECM] 12600 - Main Spark vs. Airmass vs. RPM Open Throttle, High Octane: This is the High Octane spark advance versus RPM and Cylinder Airmass.</span>
<div class="abs" style="left:1880px;top:0;width:18px;height:43px;background:#f1f1f1;border-left:1px solid #e4e4e4"></div>
<svg style="left:1883px;top:5px" width="12" height="36" viewBox="0 0 12 36"><path d="M2.300 6.800L6 3.100l3.700 3.700M2.300 26.200L6 29.900l3.700-3.700" fill="none" stroke="#bdbdbd" stroke-width="1.800"/></svg>
<span class="abs" style="right:23.5px;top:29px;white-space:nowrap">-64 to 64 °</span>
</div>

</body></html>
